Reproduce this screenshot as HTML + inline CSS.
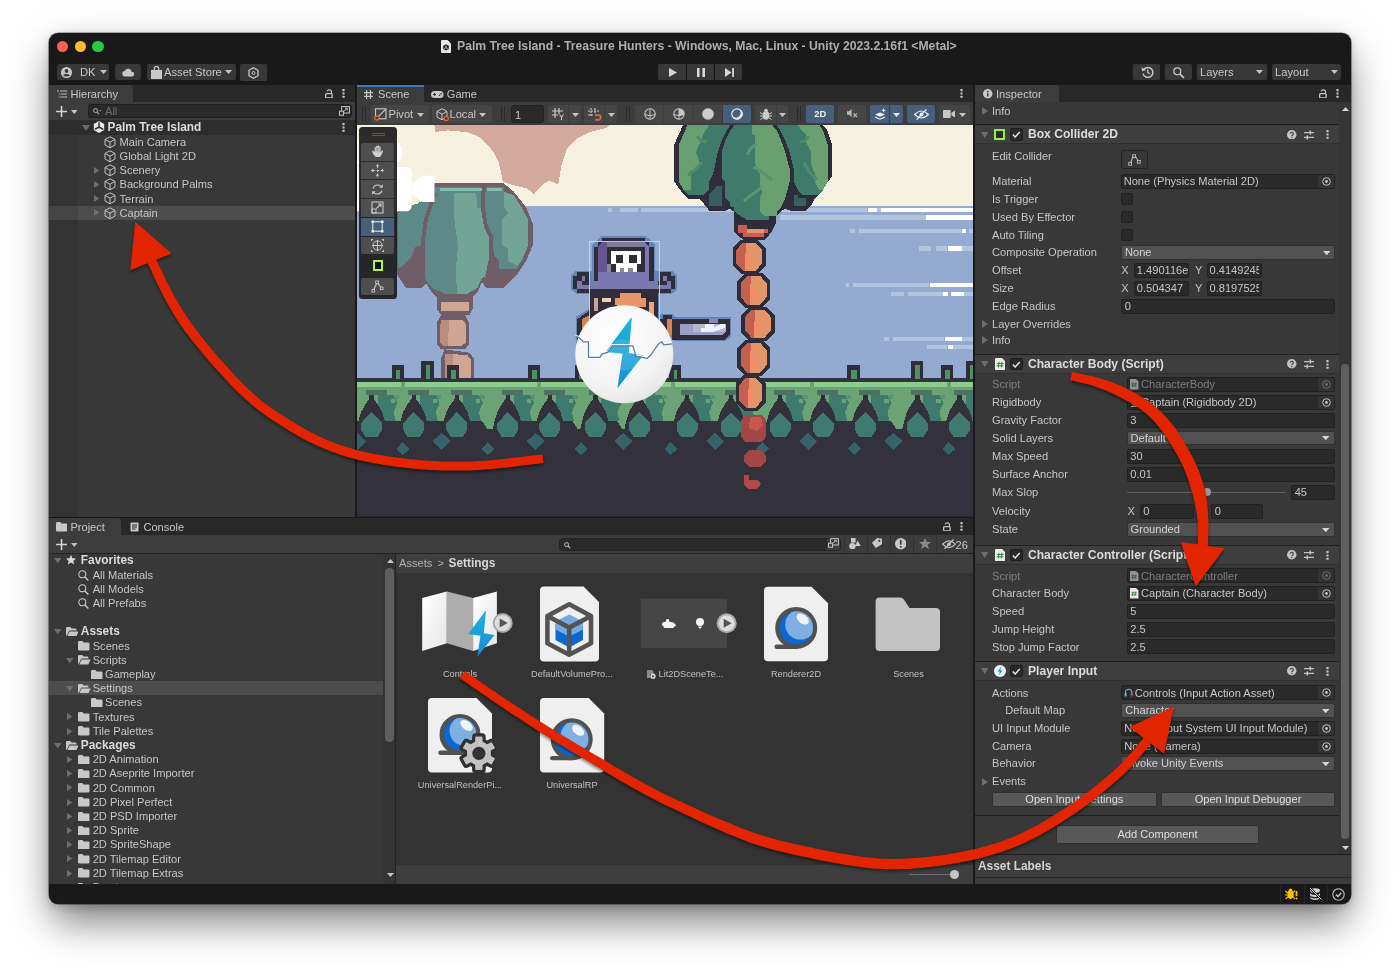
<!DOCTYPE html>
<html><head><meta charset="utf-8"><title>Unity</title>
<style>
*{box-sizing:border-box;margin:0;padding:0}
html,body{width:1400px;height:969px;background:#fff;overflow:hidden}
body{font-family:"Liberation Sans",sans-serif;font-size:11.1px;color:#c6c6c6;position:relative}
#win{position:absolute;left:49px;top:33px;width:1302px;height:871px;background:#191919;border-radius:9.5px;box-shadow:0 0 0 .6px rgba(0,0,0,.55),0 22px 38px -4px rgba(0,0,0,.46),0 3px 9px rgba(0,0,0,.2),0 6px 50px rgba(0,0,0,.1);overflow:hidden}
#page{position:absolute;left:-49px;top:-33px;width:1400px;height:969px;will-change:transform}
#page div,#page span,#page svg{position:absolute}
.tl{top:40.5px;width:11.6px;height:11.6px;border-radius:50%}
.title{left:440px;top:39px;height:14px;line-height:14px;font-weight:bold;font-size:12.2px;color:#adadad;white-space:nowrap}
.tb{top:64px;height:16px;background:#383838;border-radius:2px;line-height:16px;white-space:nowrap;font-size:11.2px}
.panel{background:#383838}
.tabbar{background:#282828;height:17px;left:0;top:0;right:0}
.tab{top:0;height:17px;background:#3c3c3c;line-height:17px;white-space:nowrap;border-radius:0 3px 0 0}
.t{white-space:nowrap;line-height:14px;height:14px}
.b{font-weight:bold;font-size:11.9px}
.dim{color:#8a8a8a}
.row{left:0;right:0;height:14.2px}
.fld{background:#2a2a2a;border:1px solid #212121;border-radius:2px;height:15px;line-height:13px;white-space:nowrap;overflow:hidden}
.dd{background:#515151;border:1px solid #303030;border-radius:2px;height:15px;line-height:13px;white-space:nowrap;overflow:hidden}
.btn{background:#585858;border:1px solid #303030;border-radius:2px;white-space:nowrap;text-align:center}
.cb{background:#2a2a2a;border:1px solid #212121;border-radius:2px;width:12px;height:12px}
.sep{background:#1a1a1a;height:1px}
.sb{background:#454545;border-radius:2px;height:18px;top:105px}
.sbb{background:#46607c}
</style></head><body>
<div id="win"><div id="page">
<!--top-->
<div class="tl" style="left:56.5px;background:#fe5f57"></div>
<div class="tl" style="left:74.5px;background:#febc2e"></div>
<div class="tl" style="left:92px;background:#28c840"></div>
<svg style="left:440.5px;top:39.5px;" width="10" height="13" viewBox="0 0 10 13"><path d="M0 1a1 1 0 0 1 1-1H6.5L10 3.5V12a1 1 0 0 1-1 1H1a1 1 0 0 1-1-1Z" fill="#e6e6e6"/><path d="M5 4.2 7.8 5.8V9L5 10.6 2.2 9V5.8Z" fill="#222"/><path d="M5 5.6v2m0 0L3.3 8.6M5 7.6l1.7 1" stroke="#e6e6e6" stroke-width=".8" fill="none"/></svg>
<div class="title" style="left:457px" id="title">Palm Tree Island - Treasure Hunters - Windows, Mac, Linux - Unity 2023.2.16f1 &lt;Metal&gt;</div>
<div class="tb" style="left:57px;width:52px"><span class="t" style="left:23px;top:1px" id="dk">DK</span><svg style="left:4px;top:2.5px;" width="11" height="11" viewBox="0 0 11 11"><circle cx="5.5" cy="5.5" r="5.5" fill="#c8c8c8"/><circle cx="5.5" cy="4" r="1.9" fill="#383838"/><path d="M2.2 8.2c1-1.6 5.6-1.6 6.6 0-.8 1.6-5.8 1.6-6.6 0Z" fill="#383838"/></svg><svg style="left:43px;top:6px" width="7" height="4" viewBox="0 0 7 4"><path d="M0 0H7L3.5 4Z" fill="#c4c4c4"/></svg></div>
<div class="tb" style="left:115px;width:26px"><svg style="left:7px;top:4px;" width="13" height="8.5" viewBox="0 0 13 8.5"><path d="M3.2 8.5a2.7 2.7 0 0 1-.4-5.4 3.6 3.6 0 0 1 6.9.6 2.4 2.4 0 0 1 .3 4.8Z" fill="#c8c8c8"/></svg></div>
<div class="tb" style="left:147px;width:89px"><span class="t" style="left:17px;top:1px" id="as">Asset Store</span><svg style="left:3.5px;top:1.5px;" width="11" height="13" viewBox="0 0 11 13"><path d="M0 4H11V13H0Z" fill="#c8c8c8"/><path d="M3.3 4V2.6a2.2 2.2 0 0 1 4.4 0V4" fill="none" stroke="#c8c8c8" stroke-width="1.2"/></svg><svg style="left:77.5px;top:6px" width="7" height="4" viewBox="0 0 7 4"><path d="M0 0H7L3.5 4Z" fill="#c4c4c4"/></svg></div>
<div class="tb" style="left:240px;width:27px;top:64px;height:17px"><svg style="left:8px;top:3px;" width="11" height="12" viewBox="0 0 11 12"><path d="M5.5 .7 10 3.3V8.7L5.5 11.3 1 8.7V3.3Z" fill="none" stroke="#c8c8c8" stroke-width="1.3"/><circle cx="5.5" cy="6" r="1.5" fill="none" stroke="#c8c8c8" stroke-width="1"/></svg></div>
<div class="tb" style="left:658px;width:27.5px;border-radius:2px 0 0 2px"><svg style="left:10.5px;top:3.5px;" width="8" height="9" viewBox="0 0 8 9"><path d="M0 0V9L8 4.5Z" fill="#d6d6d6"/></svg></div>
<div class="tb" style="left:686.5px;width:27.5px;border-radius:0"><svg style="left:10px;top:3.5px;" width="8" height="9" viewBox="0 0 8 9"><path d="M0 0H2.6V9H0ZM5.4 0H8V9H5.4Z" fill="#d6d6d6"/></svg></div>
<div class="tb" style="left:715px;width:27px;border-radius:0 2px 2px 0"><svg style="left:9.5px;top:3.5px;" width="9" height="9" viewBox="0 0 9 9"><path d="M0 0V9L6.5 4.5Z" fill="#d6d6d6"/><path d="M7.2 0H9V9H7.2Z" fill="#d6d6d6"/></svg></div>
<div class="tb" style="left:1133px;width:27px"><svg style="left:7.5px;top:2px;" width="13" height="12" viewBox="0 0 13 12"><path d="M3 3.2A5 5 0 1 1 2 7.6" fill="none" stroke="#c8c8c8" stroke-width="1.5"/><path d="M.6 1.2 1 5.2 4.9 4.3Z" fill="#c8c8c8"/><path d="M6.8 3.6V6.6L9 7.8" fill="none" stroke="#c8c8c8" stroke-width="1.3"/></svg></div>
<div class="tb" style="left:1165px;width:27px"><svg style="left:8px;top:2.5px;" width="12" height="12" viewBox="0 0 12 12"><circle cx="4.3" cy="4.3" r="3.5" fill="none" stroke="#c8c8c8" stroke-width="1.2"/><path d="M6.8 6.8 10.8 10.8" stroke="#c8c8c8" stroke-width="1.8"/></svg></div>
<div class="tb" style="left:1197px;width:70px"><span class="t" style="left:3px;top:1px" id="layers">Layers</span><svg style="left:59px;top:6px" width="7" height="4" viewBox="0 0 7 4"><path d="M0 0H7L3.5 4Z" fill="#c4c4c4"/></svg></div>
<div class="tb" style="left:1272px;width:69px"><span class="t" style="left:3px;top:1px">Layout</span><svg style="left:58.5px;top:6px" width="7" height="4" viewBox="0 0 7 4"><path d="M0 0H7L3.5 4Z" fill="#c4c4c4"/></svg></div>
<!--hier-->
<div class="panel" id="hier" style="left:49px;top:85px;width:306px;height:432px">
<div class="tabbar"></div>
<div class="tab" style="left:0;width:84px"><span class="t" style="left:21.5px;top:2px" id="htab">Hierarchy</span><svg style="left:8px;top:4.5px;" width="10" height="8" viewBox="0 0 10 8"><path d="M3 1H10M3.600 4H10M3.600 7H10" stroke="#c4c4c4" stroke-width=".95"/><path d="M.3 .3H1.700V1.700H.3ZM1.600 3.400H2.700V4.600H1.600ZM1.600 6.400H2.700V7.600H1.600Z" fill="#c4c4c4"/></svg></div>
<svg style="left:276px;top:3.8px;" width="8" height="9.5" viewBox="0 0 8 9.5"><rect x=".65" y="4.6" width="6.5" height="4.2" rx=".9" fill="none" stroke="#c4c4c4" stroke-width="1.3"/><path d="M6.500 4.600V2.900a2.300 2.300 0 0 0-4.400-.7" fill="none" stroke="#c4c4c4" stroke-width="1.200"/></svg>
<svg style="left:292.5px;top:4px;" width="3" height="9" viewBox="0 0 3 9"><rect x=".4" y=".1" width="2.2" height="2.1" rx=".5" fill="#c4c4c4"/><rect x=".4" y="3.4" width="2.2" height="2.1" rx=".5" fill="#c4c4c4"/><rect x=".4" y="6.7" width="2.2" height="2.1" rx=".5" fill="#c4c4c4"/></svg>
<div style="left:0;top:17px;width:306px;height:18px;background:#3c3c3c"></div>
<svg style="left:7px;top:20.5px;" width="11" height="11" viewBox="0 0 11 11"><path d="M5.5 0V11M0 5.5H11" stroke="#d2d2d2" stroke-width="1.6"/></svg>
<svg style="left:22px;top:24.5px" width="6.5" height="4" viewBox="0 0 6.5 4"><path d="M0 0H6.5L3.25 4Z" fill="#c4c4c4"/></svg>
<div style="left:39px;top:19px;width:264px;height:14px;background:#2a2a2a;border:1px solid #1f1f1f;border-radius:3px"><svg style="left:4px;top:3px;" width="9" height="7" viewBox="0 0 9 7"><circle cx="2.6" cy="2.6" r="2" fill="none" stroke="#b0b0b0" stroke-width="1"/><path d="M4 4 6 6.4" stroke="#b0b0b0" stroke-width="1.1"/><path d="M6 2.2H8.6L7.3 3.6Z" fill="#b0b0b0"/></svg><span class="t" style="left:16px;top:-1px;color:#6e6e6e">All</span><svg style="left:250px;top:1px;" width="11" height="10" viewBox="0 0 11 10"><rect x="2.6" y=".6" width="7.8" height="6.4" fill="none" stroke="#c4c4c4" stroke-width="1"/><rect x=".5" y="5.2" width="4" height="4" fill="#2a2a2a" stroke="#c4c4c4" stroke-width="1"/><path d="M5 5 8 2.4M6 2.2H8.3V4.4" stroke="#c4c4c4" stroke-width=".9" fill="none"/></svg></div>
<div style="left:0;top:35px;width:306px;height:397px;background:#383838"></div>
<div style="left:0;top:35px;width:29px;height:397px;background:#333"></div>
<div style="left:0;top:35px;width:306px;height:14.5px;background:#2d2d2d"></div>
<div style="left:0;top:120.6px;width:306px;height:14.2px;background:#4d4d4d"></div>
<div style="left:0;top:120.6px;width:29px;height:14.2px;background:#454545"></div>
<svg style="left:33px;top:39.5px" width="8" height="6" viewBox="0 0 8 6"><path d="M0 0H8L4.0 6Z" fill="#6a6a6a"/></svg>
<svg style="left:44px;top:36px;" width="12" height="12" viewBox="0 0 12 12"><path d="M6 0 11.2 3V9L6 12 .8 9V3Z" fill="#e8e8e8"/><path d="M6 6V1.2M6 6 1.8 8.4M6 6l4.2 2.4" stroke="#2d2d2d" stroke-width="1.5" fill="none"/><path d="M6 2.6 8.9 4.3V7.7L6 9.4 3.1 7.7V4.3Z" fill="none" stroke="#2d2d2d" stroke-width=".01"/></svg>
<span class="t b" style="left:58.5px;top:35px;color:#dcdcdc" id="pti">Palm Tree Island</span>
<svg style="left:293px;top:37.5px;" width="3" height="9" viewBox="0 0 3 9"><rect x=".4" y=".1" width="2.2" height="2.1" rx=".5" fill="#c4c4c4"/><rect x=".4" y="3.4" width="2.2" height="2.1" rx=".5" fill="#c4c4c4"/><rect x=".4" y="6.7" width="2.2" height="2.1" rx=".5" fill="#c4c4c4"/></svg>
<svg style="left:55px;top:50.5px;" width="12" height="12.6" viewBox="0 0 12 12.6"><path d="M6 .8 11 3.4V9L6 11.8 1 9V3.4Z" fill="none" stroke="#c4c4c4" stroke-width="1"/><path d="M1 3.4 6 6.2 11 3.4M6 6.2V11.8" fill="none" stroke="#c4c4c4" stroke-width="1"/></svg>
<span class="t" style="left:70.5px;top:49.8px" id="h0">Main Camera</span>
<svg style="left:55px;top:64.69999999999999px;" width="12" height="12.6" viewBox="0 0 12 12.6"><path d="M6 .8 11 3.4V9L6 11.8 1 9V3.4Z" fill="none" stroke="#c4c4c4" stroke-width="1"/><path d="M1 3.4 6 6.2 11 3.4M6 6.2V11.8" fill="none" stroke="#c4c4c4" stroke-width="1"/></svg>
<span class="t" style="left:70.5px;top:64.0px" id="h1">Global Light 2D</span>
<svg style="left:44.5px;top:81.69999999999999px" width="5.5" height="7" viewBox="0 0 5.5 7"><path d="M0 0V7L5.5 3.5Z" fill="#6e6e6e"/></svg>
<svg style="left:55px;top:78.89999999999999px;" width="12" height="12.6" viewBox="0 0 12 12.6"><path d="M6 .8 11 3.4V9L6 11.8 1 9V3.4Z" fill="none" stroke="#c4c4c4" stroke-width="1"/><path d="M1 3.4 6 6.2 11 3.4M6 6.2V11.8" fill="none" stroke="#c4c4c4" stroke-width="1"/></svg>
<span class="t" style="left:70.5px;top:78.2px" id="h2">Scenery</span>
<svg style="left:44.5px;top:95.89999999999999px" width="5.5" height="7" viewBox="0 0 5.5 7"><path d="M0 0V7L5.5 3.5Z" fill="#6e6e6e"/></svg>
<svg style="left:55px;top:93.1px;" width="12" height="12.6" viewBox="0 0 12 12.6"><path d="M6 .8 11 3.4V9L6 11.8 1 9V3.4Z" fill="none" stroke="#c4c4c4" stroke-width="1"/><path d="M1 3.4 6 6.2 11 3.4M6 6.2V11.8" fill="none" stroke="#c4c4c4" stroke-width="1"/></svg>
<span class="t" style="left:70.5px;top:92.4px" id="h3">Background Palms</span>
<svg style="left:44.5px;top:110.1px" width="5.5" height="7" viewBox="0 0 5.5 7"><path d="M0 0V7L5.5 3.5Z" fill="#6e6e6e"/></svg>
<svg style="left:55px;top:107.3px;" width="12" height="12.6" viewBox="0 0 12 12.6"><path d="M6 .8 11 3.4V9L6 11.8 1 9V3.4Z" fill="none" stroke="#c4c4c4" stroke-width="1"/><path d="M1 3.4 6 6.2 11 3.4M6 6.2V11.8" fill="none" stroke="#c4c4c4" stroke-width="1"/></svg>
<span class="t" style="left:70.5px;top:106.6px" id="h4">Terrain</span>
<svg style="left:44.5px;top:124.29999999999998px" width="5.5" height="7" viewBox="0 0 5.5 7"><path d="M0 0V7L5.5 3.5Z" fill="#6e6e6e"/></svg>
<svg style="left:55px;top:121.49999999999999px;" width="12" height="12.6" viewBox="0 0 12 12.6"><path d="M6 .8 11 3.4V9L6 11.8 1 9V3.4Z" fill="none" stroke="#c4c4c4" stroke-width="1"/><path d="M1 3.4 6 6.2 11 3.4M6 6.2V11.8" fill="none" stroke="#c4c4c4" stroke-width="1"/></svg>
<span class="t" style="left:70.5px;top:120.8px" id="h5">Captain</span>
</div>
<!--scene-->
<div class="panel" style="left:357px;top:85px;width:616px;height:432px;background:#282828"></div>
<div style="left:357px;top:85px;width:67.3px;height:17px;background:#3c3c3c;border-radius:2px 3px 0 0"></div><div style="left:357px;top:85px;width:67.3px;height:2px;background:#3a79bb"></div>
<svg style="left:364.3px;top:89.5px;" width="9" height="9" viewBox="0 0 9 9"><path d="M2.6 0V9M6.4 0V9M0 2.6H9M0 6.4H9" stroke="#c8c8c8" stroke-width="1.2"/></svg>
<span class="t" style="left:378px;top:87.3px" id="scn">Scene</span>
<svg style="left:431.4px;top:90.5px;" width="12.5" height="7" viewBox="0 0 12.5 7"><rect x="0" y="0" width="12.5" height="7" rx="3.5" fill="#c8c8c8"/><path d="M2.2 3.5H5M3.6 2.1V4.9" stroke="#282828" stroke-width="1"/><circle cx="8.6" cy="4.3" r=".8" fill="#282828"/><circle cx="10.2" cy="2.7" r=".8" fill="#282828"/></svg>
<span class="t" style="left:446.8px;top:87.3px">Game</span>
<svg style="left:960px;top:89px;" width="3" height="9" viewBox="0 0 3 9"><rect x=".4" y=".1" width="2.2" height="2.1" rx=".5" fill="#c4c4c4"/><rect x=".4" y="3.4" width="2.2" height="2.1" rx=".5" fill="#c4c4c4"/><rect x=".4" y="6.7" width="2.2" height="2.1" rx=".5" fill="#c4c4c4"/></svg>
<div style="left:357px;top:102px;width:616px;height:23px;background:#3c3c3c"></div>
<div style="left:362px;top:106px;width:1px;height:15px;background:#2a2a2a"></div><div style="left:364.6px;top:106px;width:1px;height:15px;background:#2a2a2a"></div>
<div class="sb " style="left:371px;width:57.5px;border-radius:2px"><svg style="left:3px;top:3px;" width="13" height="13" viewBox="0 0 13 13"><rect x="1.5" y=".8" width="10.5" height="10" fill="none" stroke="#c8c8c8" stroke-width="1.1"/><path d="M3 10 12 .8" stroke="#c8c8c8" stroke-width="1.1"/><circle cx="2.8" cy="10" r="2.1" fill="#454545" stroke="#e8683a" stroke-width="1.2"/></svg><span class="t" style="left:17.5px;top:2px" id="pivot">Pivot</span><svg style="left:45.5px;top:7.5px" width="7" height="4" viewBox="0 0 7 4"><path d="M0 0H7L3.5 4Z" fill="#c4c4c4"/></svg></div>
<div class="sb " style="left:432px;width:59.8px;border-radius:2px"><svg style="left:3.5px;top:2.5px;" width="13" height="13.5" viewBox="0 0 13 13.5"><path d="M6 .8 11 3.4V9L6 11.8 1 9V3.4Z" fill="none" stroke="#c8c8c8" stroke-width="1"/><path d="M1 3.4 6 6.2 11 3.4M6 6.2V11.8" fill="none" stroke="#c8c8c8" stroke-width="1"/><circle cx="10.3" cy="10.6" r="2.1" fill="#454545" stroke="#e8683a" stroke-width="1.2"/></svg><span class="t" style="left:17.5px;top:2px">Local</span><svg style="left:47px;top:7.5px" width="7" height="4" viewBox="0 0 7 4"><path d="M0 0H7L3.5 4Z" fill="#c4c4c4"/></svg></div>
<div style="left:501px;top:106px;width:1px;height:15px;background:#2a2a2a"></div><div style="left:503.6px;top:106px;width:1px;height:15px;background:#2a2a2a"></div>
<div style="left:511px;top:105px;width:32.5px;height:18px;background:#2a2a2a;border:1px solid #212121;border-radius:3px"><span class="t" style="left:3px;top:1.5px">1</span></div>
<div class="sb " style="left:548px;width:19.8px;border-radius:2px 0 0 2px"><svg style="left:4px;top:3px;" width="13" height="12" viewBox="0 0 13 12"><path d="M3 0V10M7 0V6M0 3H11M0 7H6" stroke="#c8c8c8" stroke-width="1.2"/><path d="M7.5 6.5 9.5 9 11.5 6.5M9.5 9V12" stroke="#c8c8c8" stroke-width="1.1" fill="none"/></svg></div>
<div class="sb " style="left:568.6px;width:12.4px;border-radius:0 2px 2px 0"><svg style="left:3px;top:7.5px" width="7" height="4" viewBox="0 0 7 4"><path d="M0 0H7L3.5 4Z" fill="#c4c4c4"/></svg></div>
<div class="sb " style="left:584.2px;width:20.0px;border-radius:2px 0 0 2px"><svg style="left:3.5px;top:3px;" width="14" height="13" viewBox="0 0 14 13"><path d="M3 0V9M7 0V5M0 3H11M0 7H5" stroke="#c8c8c8" stroke-width="1.2" stroke-dasharray="2 1"/><path d="M7 7.2H10.4a2.3 2.3 0 0 1 0 4.6H7" fill="none" stroke="#e8683a" stroke-width="1.7"/></svg></div>
<div class="sb " style="left:605px;width:12.2px;border-radius:0 2px 2px 0"><svg style="left:2.8px;top:7.5px" width="7" height="4" viewBox="0 0 7 4"><path d="M0 0H7L3.5 4Z" fill="#c4c4c4"/></svg></div>
<div style="left:626.3px;top:106px;width:1px;height:15px;background:#2a2a2a"></div><div style="left:628.9px;top:106px;width:1px;height:15px;background:#2a2a2a"></div>
<div class="sb " style="left:635.2px;width:28.2px;border-radius:2px 0 0 2px"><svg style="left:8.5px;top:3px;" width="12" height="12" viewBox="0 0 12 12"><circle cx="6" cy="6" r="5.2" fill="none" stroke="#c8c8c8" stroke-width="1.1"/><path d="M6 .8V11.2M.8 6.6Q6 8.8 11.2 6.6" fill="none" stroke="#c8c8c8" stroke-width="1"/></svg></div>
<div class="sb " style="left:664.3px;width:28.7px;border-radius:0"><svg style="left:8.5px;top:3px;" width="12" height="12" viewBox="0 0 12 12"><circle cx="6" cy="6" r="5.2" fill="none" stroke="#c8c8c8" stroke-width="1.1"/><path d="M6 .8V11.2M.8 6.6Q6 8.8 11.2 6.6" fill="none" stroke="#c8c8c8" stroke-width="1"/><path d="M6 .8A5.2 5.2 0 0 1 11.2 6.6Q8.6 7.7 6 7.8Z" fill="#c8c8c8"/></svg></div>
<div class="sb " style="left:694px;width:28.0px;border-radius:0"><svg style="left:8px;top:3px;" width="12" height="12" viewBox="0 0 12 12"><circle cx="6" cy="6" r="5.8" fill="#cdcdcd"/></svg></div>
<div class="sb sbb" style="left:722.9px;width:28.5px;border-radius:0 2px 2px 0"><svg style="left:8.5px;top:3px;" width="12" height="12" viewBox="0 0 12 12"><circle cx="6" cy="6" r="5.2" fill="none" stroke="#ececec" stroke-width="1.2"/><path d="M9.4 2A5 5 0 0 1 2.3 9.6 5.4 5.4 0 0 0 9.4 2Z" fill="#ececec" stroke="#ececec" stroke-width="1"/></svg></div>
<div class="sb " style="left:755px;width:21.0px;border-radius:2px 0 0 2px"><svg style="left:4.5px;top:2.5px;" width="12" height="13" viewBox="0 0 12 13"><ellipse cx="6" cy="7.4" rx="3.3" ry="4.4" fill="#c8c8c8"/><circle cx="6" cy="2.6" r="1.9" fill="#c8c8c8"/><path d="M0 4.6 3 6.2M0 8H3M.4 11.6 3 9.6M12 4.6 9 6.2M12 8H9M11.6 11.6 9 9.6" stroke="#c8c8c8" stroke-width="1"/></svg></div>
<div class="sb " style="left:776.7px;width:11.3px;border-radius:0 2px 2px 0"><svg style="left:2.3px;top:7.5px" width="7" height="4" viewBox="0 0 7 4"><path d="M0 0H7L3.5 4Z" fill="#c4c4c4"/></svg></div>
<div style="left:797px;top:106px;width:1px;height:15px;background:#2a2a2a"></div><div style="left:799.6px;top:106px;width:1px;height:15px;background:#2a2a2a"></div>
<div class="sb sbb" style="left:805.8px;width:28.4px;border-radius:2px"><span class="t b" style="left:8.5px;top:2px;font-size:9.4px;color:#f0f0f0">2D</span></div>
<div class="sb " style="left:838px;width:28.0px;border-radius:2px"><svg style="left:8.5px;top:4px;" width="12" height="10" viewBox="0 0 12 10"><path d="M0 2.2H2L4.6 0V8L2 5.8H0Z" fill="#b8b8b8"/><path d="M6.4 4.4 10 8M10 4.4 6.4 8" stroke="#b8b8b8" stroke-width="1.1"/></svg></div>
<div class="sb sbb" style="left:869.7px;width:19.6px;border-radius:2px 0 0 2px"><svg style="left:4px;top:3px;" width="13" height="12" viewBox="0 0 13 12"><path d="M1 6.6 6 4.4 11 6.6 6 8.8Z" fill="#f0f0f0"/><path d="M1 9 6 11.2 11 9" fill="none" stroke="#f0f0f0" stroke-width="1.2"/><path d="M9.6 0 10.3 1.7 12 2.4 10.3 3.1 9.6 4.8 8.9 3.1 7.2 2.4 8.9 1.7Z" fill="#f0f0f0"/></svg></div>
<div class="sb sbb" style="left:890.1px;width:13.1px;border-radius:0 2px 2px 0"><svg style="left:3.2px;top:7.5px" width="7" height="4" viewBox="0 0 7 4"><path d="M0 0H7L3.5 4Z" fill="#e6e6e6"/></svg></div>
<div class="sb sbb" style="left:906.5px;width:28.4px;border-radius:2px"><svg style="left:7px;top:3.5px;" width="15" height="11" viewBox="0 0 15 11"><path d="M.6 5.5Q7.5-1.5 14.4 5.5 7.5 12.5 .6 5.5Z" fill="none" stroke="#f0f0f0" stroke-width="1.2"/><circle cx="7.5" cy="5.5" r="1.9" fill="#f0f0f0"/><path d="M2.6 10.6 12.4 .4" stroke="#f0f0f0" stroke-width="1.3"/></svg></div>
<div class="sb " style="left:938.6px;width:31.8px;border-radius:2px"><svg style="left:4.5px;top:5px;" width="12" height="8" viewBox="0 0 12 8"><rect x="0" y="0" width="7.6" height="8" rx=".8" fill="#c8c8c8"/><path d="M8.4 2.8 12 .6V7.4L8.4 5.2Z" fill="#c8c8c8"/></svg><svg style="left:20.3px;top:7.5px" width="7" height="4" viewBox="0 0 7 4"><path d="M0 0H7L3.5 4Z" fill="#c4c4c4"/></svg></div>
<svg style="left:357px;top:125px" width="616" height="391" viewBox="357 125 616 391" shape-rendering="crispEdges"><rect x="357.0" y="125.0" width="616.0" height="82.0" fill="#f6f0de" /><rect x="357.0" y="206.4" width="616.0" height="173.6" fill="#94aad0" /><polygon points="434.3,124.9 435.4,132.2 440.9,131.1 447.6,130.4 467.5,132.2 478.6,136.6 487.4,144.4 494.1,153.2 498.5,162.1 500.7,170.9 502.9,182.0 514.0,185.3 527.3,188.6 533.9,194.2 542.8,184.2 549.4,180.9 558.3,184.2 561.6,164.3 567.1,148.8 578.2,137.7 589.3,132.2 607.0,127.8 609.2,124.9" fill="#d2a99c" /><rect x="608.0" y="207.6" width="4.0" height="4.3" fill="#b1c6dc" /><rect x="620.0" y="207.6" width="18.0" height="4.3" fill="#b1c6dc" /><rect x="641.0" y="207.6" width="225.5" height="4.3" fill="#b1c6dc" /><rect x="867.6" y="207.6" width="8.9" height="4.3" fill="#ffffff" /><rect x="876.5" y="207.6" width="4.5" height="4.3" fill="#b1c6dc" /><rect x="881.0" y="207.6" width="92.0" height="4.3" fill="#ffffff" /><rect x="780.0" y="215.4" width="146.0" height="4.3" fill="#b1c6dc" /><rect x="926.0" y="215.4" width="47.0" height="4.3" fill="#ffffff" /><rect x="850.0" y="228.7" width="4.5" height="4.3" fill="#b1c6dc" /><rect x="859.0" y="228.7" width="101.6" height="4.3" fill="#b1c6dc" /><rect x="961.7" y="228.7" width="4.3" height="4.3" fill="#ffffff" /><rect x="969.0" y="228.7" width="4.0" height="4.3" fill="#b1c6dc" /><rect x="918.5" y="246.2" width="12.2" height="4.3" fill="#b1c6dc" /><rect x="935.6" y="246.2" width="11.4" height="4.3" fill="#b1c6dc" /><rect x="948.0" y="246.2" width="13.7" height="4.3" fill="#ffffff" /><rect x="961.7" y="246.2" width="11.3" height="4.3" fill="#b1c6dc" /><rect x="845.5" y="282.8" width="3.3" height="4.3" fill="#b1c6dc" /><rect x="853.0" y="282.8" width="75.5" height="4.3" fill="#b1c6dc" /><rect x="929.6" y="282.8" width="43.4" height="4.3" fill="#ffffff" /><rect x="890.9" y="291.6" width="13.1" height="4.3" fill="#b1c6dc" /><rect x="908.0" y="291.6" width="35.0" height="4.3" fill="#b1c6dc" /><rect x="943.0" y="291.6" width="4.5" height="4.3" fill="#ffffff" /><rect x="950.6" y="291.6" width="13.4" height="4.3" fill="#ffffff" /><rect x="964.0" y="291.6" width="9.0" height="4.3" fill="#b1c6dc" /><rect x="884.0" y="336.6" width="4.6" height="4.3" fill="#b1c6dc" /><rect x="893.0" y="336.6" width="51.0" height="4.3" fill="#b1c6dc" /><rect x="944.5" y="336.6" width="17.2" height="4.3" fill="#ffffff" /><rect x="961.7" y="336.6" width="11.3" height="4.3" fill="#b1c6dc" /><rect x="927.4" y="345.0" width="19.9" height="4.3" fill="#b1c6dc" /><rect x="948.0" y="345.0" width="5.0" height="4.3" fill="#ffffff" /><rect x="953.0" y="345.0" width="20.0" height="4.3" fill="#b1c6dc" /><polygon points="434.3,183.2 503.5,183.2 513.7,191.6 526.2,207.4 533.0,224.5 533.0,244.9 526.2,260.8 517.1,274.4 503.5,288.0 486.5,288.0 481.9,282.3 477.4,292.6 472.8,297.1 436.5,297.1 432.0,292.6 426.3,283.5 421.8,288.0 405.9,288.0 396.8,274.4 394.5,215.4 403.6,206.3 417.2,204.0 434.3,192.7" fill="#6f5d68" /><polygon points="397.9,214.3 403.6,206.3 417.2,204.0 434.3,193.8 434.3,201.8 429.7,207.4 425.2,218.8 422.2,238.1 421.8,244.9 415.0,247.2 411.6,256.2 405.9,263.1 400.2,267.6 397.9,267.6" fill="#5d8a87" /><polygon points="435.4,187.0 481.9,187.0 481.9,206.3 485.3,226.7 489.9,235.8 489.9,260.8 486.5,276.7 481.9,277.8 477.4,288.0 467.2,293.7 444.5,293.7 432.0,288.0 427.4,282.3 422.9,274.4 422.9,238.1 426.3,218.8 430.9,207.4 435.4,201.8" fill="#5d8a87" /><polygon points="453.5,192.7 476.2,192.7 477.4,207.4 480.8,208.6 485.3,226.7 489.9,235.8 489.9,260.8 486.5,276.7 481.9,277.8 477.4,288.0 467.2,293.7 457.0,293.7 455.8,269.9 458.1,244.9 454.7,224.5" fill="#73a596" /><polygon points="486.5,187.0 503.5,187.0 503.5,191.6 513.7,195.0 521.6,207.4 528.4,219.9 528.4,244.9 526.2,248.3 521.6,260.8 517.1,268.7 498.9,268.7 498.9,260.8 494.4,256.2 491.0,235.8 487.6,227.9 481.9,207.4" fill="#5d8a87" /><polygon points="503.5,191.6 513.7,195.0 521.6,207.4 528.4,219.9 528.4,244.9 521.6,260.8 517.1,265.3 508.0,260.8 508.0,249.4 502.3,244.9 502.3,218.8 508.0,213.1 503.5,206.3" fill="#73a596" /><polyline points="434.7,192.7 430.4,206.3 425.9,218.8 423.4,238.1 423.4,276.7" fill="none" stroke="#6f5d68" stroke-width="4"/><polyline points="482.6,187.0 482.6,206.3 486.0,226.7 490.5,235.8 490.5,260.8 487.1,276.7" fill="none" stroke="#6f5d68" stroke-width="4"/><polygon points="439.9,187.7 481.9,187.7 481.9,190.9 439.9,190.9" fill="#80bdac" /><polygon points="486.5,187.7 502.3,187.7 502.3,190.9 486.5,190.9" fill="#80bdac" /><polygon points="436.5,297.1 472.8,297.1 472.8,308.4 469.4,315.3 441.1,315.3 436.5,308.4" fill="#6f5d68" /><polygon points="441.1,301.6 469.4,301.6 469.4,310.7 441.1,310.7" fill="#cfa693" /><polygon points="441.1,315.3 464.9,315.3 469.4,323.2 469.4,343.6 464.9,349.3 441.1,349.3 436.5,343.6 436.5,323.2" fill="#6f5d68" /><polygon points="441.1,319.8 462.6,319.8 466.0,324.3 466.0,342.5 461.5,345.9 443.3,345.9 440.4,342.5 440.4,324.3" fill="#cfa693" /><polygon points="441.1,319.8 449.0,319.8 447.9,345.9 443.3,345.9 440.4,342.5 440.4,324.3" fill="#b98d80" /><polygon points="444.5,349.3 469.4,352.7 474.0,358.4 474.0,378.4 441.1,378.4 441.1,358.4" fill="#6f5d68" /><polygon points="445.6,353.8 467.2,355.0 470.6,359.5 470.6,378.4 444.5,378.4 444.5,359.5" fill="#cfa693" /><polygon points="445.6,353.8 453.5,354.3 452.4,378.4 444.5,378.4 444.5,359.5" fill="#b98d80" /><g shape-rendering="geometricPrecision"><circle cx="390" cy="152.5" r="12.6" fill="#ffffff"/><circle cx="362" cy="152.5" r="12.6" fill="#ffffff"/><rect x="340" y="167" width="71.800" height="44.300" rx="5.500" fill="#ffffff"/><polygon points="411.8,183 422.6,175.7 434.5,175.7 434.5,202 422.6,202 411.8,194.8" fill="#ffffff"/></g><rect x="357.0" y="378.0" width="616.0" height="4.5" fill="#2c3540" /><rect x="357.0" y="382.0" width="616.0" height="18.0" fill="#6ba374" /><rect x="357.0" y="382.0" width="616.0" height="5.0" fill="#8ccd8e" /><rect x="357.0" y="399.0" width="616.0" height="117.0" fill="#33313b" /><polygon points="331.2,387 369.4,387 369.4,399 365.6,404 361.1,412 358.6,420.5 342.0,420.5 339.5,412 335.0,404 331.2,399" fill="#6ba374"/><polygon points="335.0,394.6 351.0,394.6 355.0,403 351.0,412 353.0,420.5 342.0,420.5 339.5,412 335.0,404" fill="#3f7a6e"/><rect x="348.0" y="399.0" width="4.3" height="4.3" fill="#6ba374" /><rect x="352.3" y="394.6" width="4.3" height="4.4" fill="#5b9270" /><rect x="323.0" y="390.3" width="21.0" height="4.3" fill="#4d725f" /><polygon points="373.8,387 411.5,387 411.5,399 407.7,404 403.2,412 400.7,420.5 384.6,420.5 382.1,412 377.6,404 373.8,399" fill="#6ba374"/><polygon points="377.6,394.6 393.6,394.6 397.6,403 393.6,412 395.6,420.5 384.6,420.5 382.1,412 377.6,404" fill="#3f7a6e"/><rect x="390.6" y="399.0" width="4.3" height="4.3" fill="#6ba374" /><rect x="394.9" y="394.6" width="4.3" height="4.4" fill="#5b9270" /><rect x="365.6" y="390.3" width="21.0" height="4.3" fill="#4d725f" /><rect x="400.6" y="382.0" width="4.0" height="5.0" fill="#6ba374" /><polygon points="415.9,387 454.7,387 454.7,399 450.9,404 446.4,412 443.9,420.5 426.7,420.5 424.2,412 419.7,404 415.9,399" fill="#6ba374"/><polygon points="419.7,394.6 435.7,394.6 439.7,403 435.7,412 437.7,420.5 426.7,420.5 424.2,412 419.7,404" fill="#3f7a6e"/><rect x="432.7" y="399.0" width="4.3" height="4.3" fill="#6ba374" /><rect x="437.0" y="394.6" width="4.3" height="4.4" fill="#5b9270" /><rect x="407.7" y="390.3" width="21.0" height="4.3" fill="#4d725f" /><polygon points="459.1,387 505.6,387 505.6,399 501.8,404 497.3,412 494.8,420.5 469.9,420.5 467.4,412 462.9,404 459.1,399" fill="#6ba374"/><polygon points="481.4,420 494.8,420 492.8,429 487.4,429" fill="#6ba374"/><polygon points="462.9,394.6 478.9,394.6 482.9,403 478.9,412 480.9,420.5 469.9,420.5 467.4,412 462.9,404" fill="#3f7a6e"/><rect x="475.9" y="399.0" width="4.3" height="4.3" fill="#6ba374" /><rect x="480.2" y="394.6" width="4.3" height="4.4" fill="#5b9270" /><rect x="450.9" y="390.3" width="21.0" height="4.3" fill="#4d725f" /><polygon points="510.0,387 547.7,387 547.7,399 543.9,404 539.4,412 536.9,420.5 520.8,420.5 518.3,412 513.8,404 510.0,399" fill="#6ba374"/><polygon points="513.8,394.6 529.8,394.6 533.8,403 529.8,412 531.8,420.5 520.8,420.5 518.3,412 513.8,404" fill="#3f7a6e"/><rect x="526.8" y="399.0" width="4.3" height="4.3" fill="#6ba374" /><rect x="531.1" y="394.6" width="4.3" height="4.4" fill="#5b9270" /><rect x="501.8" y="390.3" width="21.0" height="4.3" fill="#4d725f" /><rect x="536.9" y="382.0" width="4.0" height="5.0" fill="#6ba374" /><polygon points="552.1,387 593.1,387 593.1,399 589.3,404 584.8,412 582.3,420.5 562.9,420.5 560.4,412 555.9,404 552.1,399" fill="#6ba374"/><polygon points="571.6,420 582.3,420 580.3,429 577.6,429" fill="#6ba374"/><polygon points="555.9,394.6 571.9,394.6 575.9,403 571.9,412 573.9,420.5 562.9,420.5 560.4,412 555.9,404" fill="#3f7a6e"/><rect x="568.9" y="399.0" width="4.3" height="4.3" fill="#6ba374" /><rect x="573.2" y="394.6" width="4.3" height="4.4" fill="#5b9270" /><rect x="543.9" y="390.3" width="21.0" height="4.3" fill="#4d725f" /><polygon points="597.5,387 637.3,387 637.3,399 633.5,404 629.0,412 626.5,420.5 608.3,420.5 605.8,412 601.3,404 597.5,399" fill="#6ba374"/><polygon points="616.4,420 626.5,420 624.5,429 622.4,429" fill="#6ba374"/><polygon points="601.3,394.6 617.3,394.6 621.3,403 617.3,412 619.3,420.5 608.3,420.5 605.8,412 601.3,404" fill="#3f7a6e"/><rect x="614.3" y="399.0" width="4.3" height="4.3" fill="#6ba374" /><rect x="618.6" y="394.6" width="4.3" height="4.4" fill="#5b9270" /><rect x="589.3" y="390.3" width="21.0" height="4.3" fill="#4d725f" /><polygon points="641.7,387 684.8,387 684.8,399 681.0,404 676.5,412 674.0,420.5 652.5,420.5 650.0,412 645.5,404 641.7,399" fill="#6ba374"/><polygon points="645.5,394.6 661.5,394.6 665.5,403 661.5,412 663.5,420.5 652.5,420.5 650.0,412 645.5,404" fill="#3f7a6e"/><rect x="658.5" y="399.0" width="4.3" height="4.3" fill="#6ba374" /><rect x="662.8" y="394.6" width="4.3" height="4.4" fill="#5b9270" /><rect x="633.5" y="390.3" width="21.0" height="4.3" fill="#4d725f" /><rect x="671.2" y="382.0" width="4.0" height="5.0" fill="#6ba374" /><polygon points="689.2,387 728.8,387 728.8,399 725.0,404 720.5,412 718.0,420.5 700.0,420.5 697.5,412 693.0,404 689.2,399" fill="#6ba374"/><polygon points="693.0,394.6 709.0,394.6 713.0,403 709.0,412 711.0,420.5 700.0,420.5 697.5,412 693.0,404" fill="#3f7a6e"/><rect x="706.0" y="399.0" width="4.3" height="4.3" fill="#6ba374" /><rect x="710.3" y="394.6" width="4.3" height="4.4" fill="#5b9270" /><rect x="681.0" y="390.3" width="21.0" height="4.3" fill="#4d725f" /><polygon points="733.2,387 777.8,387 777.8,399 774.0,404 769.5,412 767.0,420.5 744.0,420.5 741.5,412 737.0,404 733.2,399" fill="#6ba374"/><polygon points="754.5,420 767.0,420 765.0,429 760.5,429" fill="#6ba374"/><polygon points="737.0,394.6 753.0,394.6 757.0,403 753.0,412 755.0,420.5 744.0,420.5 741.5,412 737.0,404" fill="#3f7a6e"/><rect x="750.0" y="399.0" width="4.3" height="4.3" fill="#6ba374" /><rect x="754.3" y="394.6" width="4.3" height="4.4" fill="#5b9270" /><rect x="725.0" y="390.3" width="21.0" height="4.3" fill="#4d725f" /><polygon points="782.2,387 820.8,387 820.8,399 817.0,404 812.5,412 810.0,420.5 793.0,420.5 790.5,412 786.0,404 782.2,399" fill="#6ba374"/><polygon points="786.0,394.6 802.0,394.6 806.0,403 802.0,412 804.0,420.5 793.0,420.5 790.5,412 786.0,404" fill="#3f7a6e"/><rect x="799.0" y="399.0" width="4.3" height="4.3" fill="#6ba374" /><rect x="803.3" y="394.6" width="4.3" height="4.4" fill="#5b9270" /><rect x="774.0" y="390.3" width="21.0" height="4.3" fill="#4d725f" /><rect x="809.5" y="382.0" width="4.0" height="5.0" fill="#6ba374" /><polygon points="825.2,387 863.2,387 863.2,399 859.4,404 854.9,412 852.4,420.5 836.0,420.5 833.5,412 829.0,404 825.2,399" fill="#6ba374"/><polygon points="829.0,394.6 845.0,394.6 849.0,403 845.0,412 847.0,420.5 836.0,420.5 833.5,412 829.0,404" fill="#3f7a6e"/><rect x="842.0" y="399.0" width="4.3" height="4.3" fill="#6ba374" /><rect x="846.3" y="394.6" width="4.3" height="4.4" fill="#5b9270" /><rect x="817.0" y="390.3" width="21.0" height="4.3" fill="#4d725f" /><polygon points="867.6,387 915.2,387 915.2,399 911.4,404 906.9,412 904.4,420.5 878.4,420.5 875.9,412 871.4,404 867.6,399" fill="#6ba374"/><polygon points="890.4,420 904.4,420 902.4,429 896.4,429" fill="#6ba374"/><polygon points="871.4,394.6 887.4,394.6 891.4,403 887.4,412 889.4,420.5 878.4,420.5 875.9,412 871.4,404" fill="#3f7a6e"/><rect x="884.4" y="399.0" width="4.3" height="4.3" fill="#6ba374" /><rect x="888.7" y="394.6" width="4.3" height="4.4" fill="#5b9270" /><rect x="859.4" y="390.3" width="21.0" height="4.3" fill="#4d725f" /><polygon points="919.6,387 957.3,387 957.3,399 953.5,404 949.0,412 946.5,420.5 930.4,420.5 927.9,412 923.4,404 919.6,399" fill="#6ba374"/><polygon points="923.4,394.6 939.4,394.6 943.4,403 939.4,412 941.4,420.5 930.4,420.5 927.9,412 923.4,404" fill="#3f7a6e"/><rect x="936.4" y="399.0" width="4.3" height="4.3" fill="#6ba374" /><rect x="940.7" y="394.6" width="4.3" height="4.4" fill="#5b9270" /><rect x="911.4" y="390.3" width="21.0" height="4.3" fill="#4d725f" /><rect x="946.5" y="382.0" width="4.0" height="5.0" fill="#6ba374" /><polygon points="961.7,387 999.8,387 999.8,399 996.0,404 991.5,412 989.0,420.5 972.5,420.5 970.0,412 965.5,404 961.7,399" fill="#6ba374"/><polygon points="965.5,394.6 981.5,394.6 985.5,403 981.5,412 983.5,420.5 972.5,420.5 970.0,412 965.5,404" fill="#3f7a6e"/><rect x="978.5" y="399.0" width="4.3" height="4.3" fill="#6ba374" /><rect x="982.8" y="394.6" width="4.3" height="4.4" fill="#5b9270" /><rect x="953.5" y="390.3" width="21.0" height="4.3" fill="#4d725f" /><rect x="326.8" y="394.6" width="4.4" height="5.4" fill="#2f2d3a" /><polygon points="329.0,412 333.3,416.5 339.5,423 339.5,430 335.0,437 323.0,437 318.5,430 318.5,423 324.7,416.5" fill="#3f7a6e"/><polygon points="357.0,433 366.0,441 357.0,450 348.0,441" fill="#35636a"/><rect x="369.4" y="394.6" width="4.4" height="5.4" fill="#2f2d3a" /><polygon points="371.6,412 375.9,416.5 382.1,423 382.1,430 377.6,437 365.6,437 361.1,430 361.1,423 367.3,416.5" fill="#3f7a6e"/><polygon points="402.6,442 409.6,449 402.6,455 396.6,449" fill="#35636a"/><rect x="411.5" y="394.6" width="4.4" height="5.4" fill="#2f2d3a" /><polygon points="413.7,412 418.0,416.5 424.2,423 424.2,430 419.7,437 407.7,437 403.2,430 403.2,423 409.4,416.5" fill="#3f7a6e"/><polygon points="441.7,433 450.7,441 441.7,450 432.7,441" fill="#35636a"/><rect x="454.7" y="394.6" width="4.4" height="5.4" fill="#2f2d3a" /><polygon points="456.9,412 461.2,416.5 467.4,423 467.4,430 462.9,437 450.9,437 446.4,430 446.4,423 452.6,416.5" fill="#3f7a6e"/><polygon points="487.9,442 494.9,449 487.9,455 481.9,449" fill="#35636a"/><rect x="505.6" y="394.6" width="4.4" height="5.4" fill="#2f2d3a" /><polygon points="507.8,412 512.1,416.5 518.3,423 518.3,430 513.8,437 501.8,437 497.3,430 497.3,423 503.5,416.5" fill="#3f7a6e"/><polygon points="535.8,433 544.8,441 535.8,450 526.8,441" fill="#35636a"/><rect x="547.7" y="394.6" width="4.4" height="5.4" fill="#2f2d3a" /><polygon points="549.9,412 554.2,416.5 560.4,423 560.4,430 555.9,437 543.9,437 539.4,430 539.4,423 545.6,416.5" fill="#3f7a6e"/><polygon points="580.9,442 587.9,449 580.9,455 574.9,449" fill="#35636a"/><rect x="593.1" y="394.6" width="4.4" height="5.4" fill="#2f2d3a" /><polygon points="595.3,412 599.6,416.5 605.8,423 605.8,430 601.3,437 589.3,437 584.8,430 584.8,423 591.0,416.5" fill="#3f7a6e"/><polygon points="623.3,433 632.3,441 623.3,450 614.3,441" fill="#35636a"/><rect x="637.3" y="394.6" width="4.4" height="5.4" fill="#2f2d3a" /><polygon points="639.5,412 643.8,416.5 650.0,423 650.0,430 645.5,437 633.5,437 629.0,430 629.0,423 635.2,416.5" fill="#3f7a6e"/><polygon points="670.5,442 677.5,449 670.5,455 664.5,449" fill="#35636a"/><rect x="684.8" y="394.6" width="4.4" height="5.4" fill="#2f2d3a" /><polygon points="687.0,412 691.3,416.5 697.5,423 697.5,430 693.0,437 681.0,437 676.5,430 676.5,423 682.7,416.5" fill="#3f7a6e"/><polygon points="715.0,433 724.0,441 715.0,450 706.0,441" fill="#35636a"/><rect x="728.8" y="394.6" width="4.4" height="5.4" fill="#2f2d3a" /><polygon points="731.0,412 735.3,416.5 741.5,423 741.5,430 737.0,437 725.0,437 720.5,430 720.5,423 726.7,416.5" fill="#3f7a6e"/><polygon points="762.0,442 769.0,449 762.0,455 756.0,449" fill="#35636a"/><rect x="777.8" y="394.6" width="4.4" height="5.4" fill="#2f2d3a" /><polygon points="780.0,412 784.3,416.5 790.5,423 790.5,430 786.0,437 774.0,437 769.5,430 769.5,423 775.7,416.5" fill="#3f7a6e"/><polygon points="808.0,433 817.0,441 808.0,450 799.0,441" fill="#35636a"/><rect x="820.8" y="394.6" width="4.4" height="5.4" fill="#2f2d3a" /><polygon points="823.0,412 827.3,416.5 833.5,423 833.5,430 829.0,437 817.0,437 812.5,430 812.5,423 818.7,416.5" fill="#3f7a6e"/><polygon points="854.0,442 861.0,449 854.0,455 848.0,449" fill="#35636a"/><rect x="863.2" y="394.6" width="4.4" height="5.4" fill="#2f2d3a" /><polygon points="865.4,412 869.7,416.5 875.9,423 875.9,430 871.4,437 859.4,437 854.9,430 854.9,423 861.1,416.5" fill="#3f7a6e"/><polygon points="893.4,433 902.4,441 893.4,450 884.4,441" fill="#35636a"/><rect x="915.2" y="394.6" width="4.4" height="5.4" fill="#2f2d3a" /><polygon points="917.4,412 921.7,416.5 927.9,423 927.9,430 923.4,437 911.4,437 906.9,430 906.9,423 913.1,416.5" fill="#3f7a6e"/><polygon points="948.4,442 955.4,449 948.4,455 942.4,449" fill="#35636a"/><rect x="957.3" y="394.6" width="4.4" height="5.4" fill="#2f2d3a" /><polygon points="959.5,412 963.8,416.5 970.0,423 970.0,430 965.5,437 953.5,437 949.0,430 949.0,423 955.2,416.5" fill="#3f7a6e"/><polygon points="987.5,433 996.5,441 987.5,450 978.5,441" fill="#35636a"/><rect x="999.8" y="394.6" width="4.4" height="5.4" fill="#2f2d3a" /><polygon points="1002.0,412 1006.3,416.5 1012.5,423 1012.5,430 1008.0,437 996.0,437 991.5,430 991.5,423 997.7,416.5" fill="#3f7a6e"/><polygon points="1033.0,442 1040.0,449 1033.0,455 1027.0,449" fill="#35636a"/><rect x="391.5" y="365.4" width="12.2" height="13.1" fill="#2f2d3a" /><rect x="395.8" y="369.7" width="4.4" height="8.8" fill="#4f9163" /><rect x="421.4" y="361.0" width="12.2" height="17.5" fill="#2f2d3a" /><rect x="425.7" y="365.3" width="4.4" height="13.2" fill="#4f9163" /><rect x="447.0" y="365.4" width="12.0" height="13.1" fill="#2f2d3a" /><rect x="451.3" y="369.7" width="4.2" height="8.8" fill="#4f9163" /><rect x="527.7" y="365.4" width="12.3" height="13.1" fill="#2f2d3a" /><rect x="532.0" y="369.7" width="4.5" height="8.8" fill="#4f9163" /><rect x="575.0" y="365.4" width="12.0" height="13.1" fill="#2f2d3a" /><rect x="579.3" y="369.7" width="4.2" height="8.8" fill="#4f9163" /><rect x="669.4" y="365.4" width="11.1" height="13.1" fill="#2f2d3a" /><rect x="673.7" y="369.7" width="3.3" height="8.8" fill="#4f9163" /><rect x="846.6" y="365.4" width="13.4" height="13.1" fill="#2f2d3a" /><rect x="850.9" y="369.7" width="5.6" height="8.8" fill="#4f9163" /><rect x="910.8" y="361.0" width="12.2" height="17.5" fill="#2f2d3a" /><rect x="915.1" y="365.3" width="4.4" height="13.2" fill="#4f9163" /><rect x="940.7" y="365.4" width="12.3" height="13.1" fill="#2f2d3a" /><rect x="945.0" y="369.7" width="4.5" height="8.8" fill="#4f9163" /><rect x="966.0" y="361.0" width="12.0" height="17.5" fill="#2f2d3a" /><rect x="970.3" y="365.3" width="4.2" height="13.2" fill="#4f9163" /><polygon points="683.0,125.1 674.3,144.4 674.3,181.7 683.6,194.6 688.1,198.7 699.7,198.7 709.4,210.6 725.4,210.6 729.9,208.7 734.4,211.9 738.9,215.8 747.3,220.3 768.5,220.3 776.9,215.8 780.7,211.3 785.2,208.7 790.4,210.6 806.4,210.6 810.9,206.1 814.8,198.7 818.6,194.6 823.1,190.1 827.6,181.7 832.1,176.6 832.1,144.4 827.6,130.9 823.1,125.1" fill="#2f2d3a" /><polygon points="687.5,125.1 678.9,144.4 678.9,181.7 683.6,190.1 688.1,194.6 704.2,194.6 708.7,190.1 708.7,183.0 713.2,174.0 717.7,152.1 721.6,140.6 726.7,130.9 729.9,125.1" fill="#407a6a" /><polygon points="687.5,125.1 678.9,144.4 678.9,181.7 683.6,190.1 691.4,190.1 691.4,171.4 699.7,162.4 695.9,152.1 699.7,143.1 704.9,130.9 709.4,125.1" fill="#68a070" /><polygon points="734.4,125.1 729.9,130.9 725.4,140.6 721.6,152.1 721.6,177.9 725.4,181.7 725.4,198.4 729.9,202.3 729.9,206.1 734.4,207.4 734.4,211.3 738.9,215.8 747.3,220.3 768.5,220.3 768.5,215.8 776.9,215.8 776.9,211.3 780.7,207.4 785.2,198.4 789.7,181.7 789.7,168.9 785.2,152.1 780.7,139.3 776.9,130.9 772.4,125.1" fill="#407a6a" /><polygon points="751.8,125.1 751.8,134.1 755.0,135.4 755.0,164.4 760.1,174.0 760.1,186.9 762.7,192.0 760.1,197.1 760.1,211.3 764.0,215.8 776.9,215.8 776.9,211.3 780.7,207.4 785.2,198.4 789.7,181.7 789.7,168.9 785.2,152.1 780.7,139.3 776.9,130.9 772.4,125.1" fill="#68a070" /><polygon points="776.9,125.1 780.7,130.9 785.2,140.6 789.7,152.1 793.6,168.9 793.6,181.7 798.1,190.1 801.9,194.6 818.6,194.6 823.1,190.1 827.6,181.7 827.6,144.4 823.1,130.9 819.3,125.1" fill="#407a6a" /><polygon points="798.1,125.1 801.9,130.9 806.4,135.4 806.4,143.1 810.9,152.1 810.9,163.7 814.8,174.0 814.8,181.7 819.3,190.1 823.1,190.1 827.6,181.7 827.6,144.4 823.1,130.9 819.3,125.1" fill="#68a070" /><polygon points="709.4,194.6 713.2,190.1 717.1,185.6 721.6,185.6 721.6,206.1 709.4,206.1" fill="#35605f" /><polygon points="793.6,194.6 798.1,194.6 798.1,198.4 806.4,198.4 806.4,206.1 793.6,206.1" fill="#35605f" /><polyline points="747.3,154.7 749.9,149.6 753.7,145.7 757.6,144.4" fill="none" stroke="#5a9470" stroke-width="3"/><polyline points="753.7,166.9 760.1,170.8 766.6,175.3 771.7,180.4" fill="none" stroke="#5a9470" stroke-width="3"/><polyline points="743.4,201.0 748.6,197.1 753.7,193.3 761.4,187.5" fill="none" stroke="#5a9470" stroke-width="3"/><polyline points="688.1,175.3 697.1,167.6 702.3,162.4" fill="none" stroke="#4f8c6e" stroke-width="3"/><polyline points="697.1,136.7 702.3,141.9 707.4,141.9" fill="none" stroke="#4f8c6e" stroke-width="3"/><polyline points="800.0,141.9 805.1,140.6 809.0,136.7" fill="none" stroke="#4f8c6e" stroke-width="3"/><polyline points="803.9,162.4 809.0,171.4 816.7,179.8" fill="none" stroke="#4f8c6e" stroke-width="3"/><polygon points="734.4,211.9 734.4,231.9 738.9,236.4 743.4,240.0 764.0,240.0 767.9,236.4 771.7,231.9 776.2,222.9 776.2,215.8 768.5,220.3 747.3,220.3" fill="#2f2d3a" /><polygon points="738.3,224.8 747.3,224.8 747.3,228.6 767.9,228.6 767.9,233.1 764.0,233.1 764.0,237.0 743.4,237.0 743.4,233.1 738.3,233.1" fill="#c95d52" /><polygon points="747.3,228.6 764.0,228.6 764.0,233.1 747.3,233.1" fill="#e3956a" /><polygon points="741.1,239.5 757.4,239.5 766.0,248.1 766.0,265.4 757.4,274.0 741.1,274.0 732.5,265.4 732.5,248.1" fill="#2f2d3a"/><polygon points="745.6,272.5 761.7,272.5 770.3,281.1 770.3,299.4 761.7,308.0 745.6,308.0 737.0,299.4 737.0,281.1" fill="#2f2d3a"/><polygon points="749.8,306.5 766.2,306.5 774.8,315.1 774.8,332.4 766.2,341.0 749.8,341.0 741.2,332.4 741.2,315.1" fill="#2f2d3a"/><polygon points="745.6,339.5 761.7,339.5 770.3,348.1 770.3,367.4 761.7,376.0 745.6,376.0 737.0,367.4 737.0,348.1" fill="#2f2d3a"/><polygon points="744.1,374.5 757.4,374.5 766.0,383.1 766.0,402.4 757.4,411.0 744.1,411.0 735.5,402.4 735.5,383.1" fill="#2f2d3a"/><polygon points="742.8,242.7 755.7,242.7 762.2,250.2 762.2,263.3 755.7,270.8 742.8,270.8 736.3,263.3 736.3,250.2" fill="#e3956a"/><polygon points="742.8,242.7 746.3,242.7 745.3,270.8 742.8,270.8 736.3,263.3 736.3,250.2" fill="#c4604f"/><rect x="745.3" y="253.7" width="5.5" height="12.6" fill="#f58b68" /><polygon points="747.3,275.7 760.0,275.7 766.5,283.2 766.5,297.3 760.0,304.8 747.3,304.8 740.8,297.3 740.8,283.2" fill="#e3956a"/><polygon points="747.3,275.7 750.8,275.7 749.8,304.8 747.3,304.8 740.8,297.3 740.8,283.2" fill="#c4604f"/><rect x="749.8" y="286.7" width="5.5" height="13.6" fill="#f58b68" /><polygon points="751.5,309.7 764.5,309.7 771.0,317.2 771.0,330.3 764.5,337.8 751.5,337.8 745.0,330.3 745.0,317.2" fill="#e3956a"/><polygon points="751.5,309.7 755.0,309.7 754.0,337.8 751.5,337.8 745.0,330.3 745.0,317.2" fill="#c4604f"/><rect x="754.0" y="320.7" width="5.5" height="12.6" fill="#f58b68" /><polygon points="747.3,342.7 760.0,342.7 766.5,350.2 766.5,365.3 760.0,372.8 747.3,372.8 740.8,365.3 740.8,350.2" fill="#e3956a"/><polygon points="747.3,342.7 750.8,342.7 749.8,372.8 747.3,372.8 740.8,365.3 740.8,350.2" fill="#c4604f"/><rect x="749.8" y="353.7" width="5.5" height="14.6" fill="#f58b68" /><polygon points="745.8,377.7 755.7,377.7 762.2,385.2 762.2,400.3 755.7,407.8 745.8,407.8 739.3,400.3 739.3,385.2" fill="#e3956a"/><polygon points="745.8,377.7 749.3,377.7 748.3,407.8 745.8,407.8 739.3,400.3 739.3,385.2" fill="#c4604f"/><rect x="748.3" y="388.7" width="5.5" height="14.6" fill="#f58b68" /><polygon points="745.5,415 761.5,415 765.8,420 765.8,437 761.5,442 745.5,442 741.4,437 741.4,420" fill="#a34646"/><polygon points="750,417 761,417 763,426 757,431 749,428" fill="#c9574b"/><polygon points="750,449.5 760,449.5 766,456 766,462 760,467 750,467 744,462 744,456" fill="#a34646"/><polygon points="744,475 748.5,475 748.5,479.500 757,479.500 761,483.500 757,489 748.500,489 744,484" fill="#b04a48"/><polygon points="600.9,236.2 646.1,236.2 655.4,244.9 655.4,270.9 672.1,270.9 677.1,275.8 677.1,289.4 672.1,293.8 659.7,293.8 659.7,314.2 672.7,314.2 675.2,317.3 730.9,317.3 730.9,336.5 726.0,340.8 674.0,340.8 659.1,326.6 659.1,348.9 576.1,348.9 576.1,316.7 588.5,309.2 588.5,293.8 576.1,293.8 571.2,289.4 571.2,275.8 576.1,270.9 592.2,270.9 592.2,244.9" fill="#5c7fb0" opacity=".85"/><polygon points="589.8,291.3 657.9,291.3 657.9,319.2 662.8,319.2 662.8,348.9 577.4,348.9 577.4,319.2 582.3,315.4 589.8,310.5" fill="#2f2d3a" /><polygon points="619.5,293.2 641.2,293.2 641.2,297.5 645.5,297.5 645.5,306.8 619.5,306.8 615.1,304.3 615.1,297.5 619.5,297.5" fill="#e9956a" /><polygon points="594.1,297.5 598.4,297.5 598.4,310.5 594.1,310.5" fill="#c9a29a" /><polygon points="602.1,298.1 610.8,298.1 610.8,301.8 602.1,301.8" fill="#f7cdb5" /><polygon points="649.2,301.8 653.5,301.8 653.5,316.7 649.2,316.7" fill="#f0a870" /><polygon points="581.7,319.2 589.8,315.4 589.8,335.3 581.7,335.3" fill="#d8824f" /><polygon points="573.0,276.4 577.4,276.4 577.4,272.1 589.8,272.1 589.8,280.8 659.1,280.8 659.1,272.1 670.9,272.1 670.9,276.4 675.2,276.4 675.2,288.8 670.9,288.8 670.9,292.5 577.4,292.5 577.4,288.8 573.0,288.8" fill="#2f2d3a" /><polygon points="577.4,280.8 581.7,280.8 581.7,285.1 666.5,285.1 666.5,280.8 670.9,280.8 670.9,288.8 577.4,288.8" fill="#7b78b0" /><polygon points="581.7,276.4 585.4,276.4 585.4,280.8 581.7,280.8" fill="#7b78b0" /><polygon points="662.8,276.4 666.5,276.4 666.5,280.8 662.8,280.8" fill="#7b78b0" /><polygon points="602.1,238.0 644.9,238.0 644.9,242.4 649.2,242.4 649.2,246.7 653.5,246.7 653.5,280.8 594.1,280.8 594.1,246.7 598.4,246.7 598.4,242.4 602.1,242.4" fill="#2f2d3a" /><polygon points="602.1,242.4 644.9,242.4 649.2,246.7 649.2,280.8 657.9,280.8 657.9,285.1 589.8,285.1 589.8,280.8 598.4,280.8 598.4,246.7" fill="#7b78b0" /><polygon points="602.1,242.4 607.1,242.4 607.1,272.1 598.4,272.1 598.4,246.7" fill="#6a5594" /><polygon points="607.1,243.0 641.2,243.0 641.2,246.7 607.1,246.7" fill="#7f7f90" /><polygon points="607.1,246.7 644.9,246.7 644.9,272.1 607.1,272.1" fill="#2f2d3a" /><polygon points="611.4,251.1 641.2,251.1 641.2,264.1 636.8,264.1 636.8,272.1 615.8,272.1 615.8,264.1 611.4,264.1" fill="#ffffff" /><polygon points="615.8,255.4 623.2,255.4 623.2,263.4 615.8,263.4" fill="#2f2d3a" /><polygon points="628.8,255.4 636.8,255.4 636.8,263.4 628.8,263.4" fill="#2f2d3a" /><polygon points="620.1,268.4 623.8,268.4 623.8,272.1 620.1,272.1" fill="#8a8a94" /><polygon points="628.2,268.4 632.5,268.4 632.5,272.1 628.2,272.1" fill="#8a8a94" /><polygon points="607.1,264.1 611.4,264.1 611.4,272.1 607.1,272.1" fill="#8a8a94" /><polygon points="662.8,314.8 671.5,314.8 671.5,319.2 675.8,319.2 675.8,318.5 729.7,318.5 729.7,335.3 724.7,339.6 671.5,339.6 671.5,335.3 662.8,335.3" fill="#2f2d3a" /><polygon points="666.5,319.2 671.5,319.2 671.5,335.3 666.5,335.3" fill="#d8824f" /><polygon points="680.2,323.5 726.0,323.5 726.0,331.5 722.3,335.3 680.2,335.3" fill="#9aa0c5" /><polygon points="692.5,323.5 726.0,323.5 726.0,331.5 692.5,331.5" fill="#b4b6cc" /><polygon points="701.2,327.8 704.9,327.8 704.9,324.1 713.6,324.1 713.6,327.8 721.0,324.1 724.7,324.1 724.7,327.8 713.6,331.5 701.2,331.5" fill="#eef0fb" /><polygon points="709.3,319.2 717.9,319.2 717.9,322.9 709.3,322.9" fill="#8c86bd" /><rect x="589" y="241" width="70" height="137" fill="none" stroke="#bfe9a8" stroke-width=".9"/><defs><radialGradient id="cg" cx=".4" cy=".3" r=".75"><stop offset="0" stop-color="#ffffff"/><stop offset=".7" stop-color="#f3f3f3"/><stop offset="1" stop-color="#e4e4e4"/></radialGradient><linearGradient id="bg" x1="0" y1="0" x2="0" y2="1"><stop offset="0" stop-color="#1cb6da"/><stop offset="1" stop-color="#1690d6"/></linearGradient></defs><g shape-rendering="geometricPrecision"><circle cx="624.3" cy="354.3" r="49" fill="url(#cg)"/><polygon points="630.8,318 605.6,352.1 622.6,353.7 617.4,388.2 643.2,355.2 628.8,353.1 631.8,318" fill="url(#bg)"/><circle cx="624" cy="355" r="15.500" fill="#ffffff" opacity=".12" stroke="#ffffff" stroke-opacity=".5" stroke-width=".6"/><polyline points="575.5,335.6 579.2,336.6 583.3,340.7 589.5,340.7 589.5,356.2 599.9,356.2 601.9,353.1 608.1,351.1 612.2,344.9 633.9,344.9 637.0,355.2 647.3,357.3 651.5,353.1 655.6,346.9 658.7,342.8 661.8,340.7 663.8,343.8 672.1,342.8" fill="none" stroke="#ffffff" stroke-width="1.6" opacity=".9"/><polyline points="575.5,336.6 579.2,337.6 583.3,341.8 588.5,341.8 588.5,357.3 599.9,357.3 601.9,354.2 608.1,352.1 612.2,345.9 632.9,345.9 636.0,356.2 647.3,358.3 651.5,354.2 655.6,348.0 658.7,343.8 661.8,341.8 663.8,344.9 672.1,343.8" fill="none" stroke="#5a79a8" stroke-width="1.3" stroke-linejoin="round"/></g></svg>
<div style="left:359px;top:127px;width:38px;height:171.5px;background:rgba(28,28,28,.93);border-radius:3.500px"></div>
<div style="left:371.5px;top:132.7px;width:13.5px;height:1px;background:#5a5a5a"></div><div style="left:371.5px;top:135.3px;width:13.5px;height:1px;background:#5a5a5a"></div>
<div class="" style="left:361.2px;top:142.6px;width:33px;height:18.4px;border-radius:2px 2px 0 0;background:#4e4e4e"><svg style="left:10px;top:2.700000000000003px;" width="13" height="13" viewBox="0 0 13 13"><path d="M3.600 7V2.800a.750.750 0 0 1 1.500 0V1.600a.750.750 0 0 1 1.500 0V1.300a.750.750 0 0 1 1.500 0V2a.750.750 0 0 1 1.500 0V7.400L10.800 5.600a.700.700 0 0 1 1.200.700C11.200 8.400 10.400 10.600 9 12H4.800C3.200 10.600 1.800 8.600 1 6.600a.700.700 0 0 1 1.200-.600Z" fill="#d0d0d0"/><path d="M5.100 2.800V6.500M6.600 2V6.500M8.100 2V6.500" stroke="#4e4e4e" stroke-width=".45"/></svg></div>
<div class="" style="left:361.2px;top:162px;width:33px;height:17.3px;border-radius:0;background:#4e4e4e"><svg style="left:10px;top:2.1500000000000057px;" width="13" height="13" viewBox="0 0 13 13"><path d="M6.5 0 8.4 2.2H4.6ZM6.5 13 4.6 10.800H8.4ZM0 6.500 2.200 4.600V8.400ZM13 6.500 10.800 8.400V4.600Z" fill="#c8c8c8"/><path d="M6.500 2V11M2 6.500H11" stroke="#c8c8c8" stroke-width="1" stroke-dasharray="2.2 1.600"/></svg></div>
<div class="" style="left:361.2px;top:180.3px;width:33px;height:17.7px;border-radius:0;background:#4e4e4e"><svg style="left:10px;top:2.3499999999999943px;" width="13" height="13" viewBox="0 0 13 13"><path d="M10.800 4A5 5 0 0 0 2 5.500M2.200 9A5 5 0 0 0 11 7.500" fill="none" stroke="#c8c8c8" stroke-width="1.100"/><path d="M11.800 1.200V4.800H8.200ZM1.200 11.800V8.200H4.800Z" fill="#c8c8c8"/></svg></div>
<div class="" style="left:361.2px;top:199px;width:33px;height:17.8px;border-radius:0;background:#4e4e4e"><svg style="left:10px;top:2.4000000000000057px;" width="13" height="13" viewBox="0 0 13 13"><rect x="1" y="1" width="11" height="11" fill="none" stroke="#c8c8c8" stroke-width="1.100"/><rect x="1" y="8" width="4" height="4" fill="none" stroke="#c8c8c8" stroke-width="1"/><path d="M5.500 7.500 10 3M7 3H10V6" fill="none" stroke="#c8c8c8" stroke-width="1.100"/></svg></div>
<div class="sbb" style="left:361.2px;top:217.9px;width:33px;height:17.7px;border-radius:0;background:#46607c"><svg style="left:10px;top:2.3499999999999943px;" width="13" height="13" viewBox="0 0 13 13"><rect x="1.800" y="1.800" width="9.400" height="9.400" fill="none" stroke="#f0f0f0" stroke-width="1"/><path d="M.5.500H3V3H.5ZM10 .5H12.500V3H10ZM.5 10H3V12.500H.5ZM10 10H12.500V12.500H10Z" fill="#f0f0f0"/></svg></div>
<div class="" style="left:361.2px;top:236.7px;width:33px;height:17.5px;border-radius:0 0 2px 2px;background:#4e4e4e"><svg style="left:10px;top:2.25px;" width="13" height="13" viewBox="0 0 13 13"><circle cx="6.500" cy="6.500" r="4.600" fill="none" stroke="#c8c8c8" stroke-width="1"/><path d="M6.500 1V12M1 6.500H12" stroke="#c8c8c8" stroke-width="1"/><path d="M0 0H2.500L0 2.500ZM13 0H10.500L13 2.500ZM0 13H2.500L0 10.500ZM13 13H10.500L13 10.500Z" fill="#c8c8c8"/></svg></div>
<div class="" style="left:361.2px;top:277.8px;width:33px;height:17.4px;border-radius:2px;background:#4e4e4e"><svg style="left:10px;top:2.1999999999999886px;" width="13" height="13" viewBox="0 0 13 13"><path d="M2.400 10.500 6 2.600 10.500 8" fill="none" stroke="#c8c8c8" stroke-width="1.100"/><rect x="4.800" y="1" width="2.600" height="2.600" fill="#454545" stroke="#c8c8c8" stroke-width=".9"/><rect x="1" y="9.400" width="2.600" height="2.600" fill="#454545" stroke="#c8c8c8" stroke-width=".9"/><rect x="9.400" y="7" width="2.600" height="2.600" fill="#454545" stroke="#c8c8c8" stroke-width=".9"/></svg></div>
<div style="left:372.7px;top:260.4px;width:10.6px;height:10.6px;border:2.6px solid #b6f13f;background:#101010"></div>
<!--proj-->
<div class="panel" style="left:49px;top:518px;width:924px;height:366px;background:#383838"></div>
<div style="left:49px;top:518px;width:924px;height:17px;background:#282828"></div>
<div style="left:49px;top:518px;width:72px;height:17px;background:#3c3c3c;border-radius:0 3px 0 0"></div>
<svg style="left:55.8px;top:522px;" width="11.5" height="9.5" viewBox="0 0 11.5 9.5"><path d="M0 1.2A1.200 1.200 0 0 1 1.200 0H4.300L5.600 1.600H10.300A1.200 1.200 0 0 1 11.500 2.800V8.300A1.200 1.200 0 0 1 10.300 9.500H1.200A1.200 1.200 0 0 1 0 8.300Z" fill="#c8c8c8"/></svg>
<span class="t" style="left:70.4px;top:520.3px" id="ptab">Project</span>
<svg style="left:130px;top:522px;" width="9" height="10" viewBox="0 0 9 10"><rect x=".5" y=".5" width="8" height="9" rx="1" fill="#c8c8c8"/><path d="M2 3H7M2 5H7M2 7H5.500" stroke="#282828" stroke-width="1"/></svg>
<span class="t" style="left:143.4px;top:520.3px" id="ctab">Console</span>
<svg style="left:943px;top:521.8px;" width="8" height="9.5" viewBox="0 0 8 9.5"><rect x=".65" y="4.6" width="6.5" height="4.2" rx=".9" fill="none" stroke="#c4c4c4" stroke-width="1.3"/><path d="M6.500 4.600V2.900a2.300 2.300 0 0 0-4.400-.7" fill="none" stroke="#c4c4c4" stroke-width="1.200"/></svg>
<svg style="left:960px;top:522px;" width="3" height="9" viewBox="0 0 3 9"><rect x=".4" y=".1" width="2.2" height="2.1" rx=".5" fill="#c4c4c4"/><rect x=".4" y="3.4" width="2.2" height="2.1" rx=".5" fill="#c4c4c4"/><rect x=".4" y="6.7" width="2.2" height="2.1" rx=".5" fill="#c4c4c4"/></svg>
<div style="left:49px;top:535px;width:924px;height:18px;background:#3c3c3c"></div>
<div style="left:49px;top:553px;width:924px;height:1px;background:#232323"></div>
<svg style="left:56px;top:538.5px;" width="11" height="11" viewBox="0 0 11 11"><path d="M5.500 0V11M0 5.500H11" stroke="#d2d2d2" stroke-width="1.600"/></svg>
<svg style="left:71px;top:542.5px" width="6.5" height="4" viewBox="0 0 6.5 4"><path d="M0 0H6.5L3.25 4Z" fill="#c4c4c4"/></svg>
<div style="left:558.5px;top:537.500px;width:282px;height:13.500px;background:#3c3c3c;border:1px solid #242424;border-radius:3px"><div style="left:0;top:0;width:267px;height:11.500px;background:#2a2a2a;border-radius:2px 0 0 2px"></div><svg style="left:4px;top:3px;" width="7" height="7" viewBox="0 0 7 7"><circle cx="2.600" cy="2.600" r="2" fill="none" stroke="#c0c0c0" stroke-width="1"/><path d="M4 4 6.200 6.200" stroke="#c0c0c0" stroke-width="1.100"/></svg></div>
<div style="left:843.5px;top:535px;width:1px;height:18px;background:#303030"></div>
<div style="left:866.5px;top:535px;width:1px;height:18px;background:#303030"></div>
<div style="left:889.7px;top:535px;width:1px;height:18px;background:#303030"></div>
<div style="left:912.7px;top:535px;width:1px;height:18px;background:#303030"></div>
<div style="left:936.3px;top:535px;width:1px;height:18px;background:#303030"></div>
<svg style="left:828px;top:538.3px;" width="11" height="10" viewBox="0 0 11 10"><rect x="2.600" y=".6" width="7.800" height="6.400" fill="none" stroke="#c4c4c4" stroke-width="1"/><rect x=".5" y="5.200" width="4" height="4" fill="#3c3c3c" stroke="#c4c4c4" stroke-width="1"/><path d="M5 5 8 2.400M6 2.200H8.300V4.400" stroke="#c4c4c4" stroke-width=".9" fill="none"/></svg>
<svg style="left:848.5px;top:537.8px;" width="12" height="11.5" viewBox="0 0 12 11.5"><rect x="2" y="0" width="4.600" height="4.600" fill="#c8c8c8"/><circle cx="3.400" cy="8.200" r="3.200" fill="#c8c8c8"/><path d="M8.500 2.500 11.800 8H6Z" fill="#c8c8c8"/></svg>
<svg style="left:871px;top:538.3px;" width="11" height="10" viewBox="0 0 11 10"><path d="M5.500 0H11V5.500L5.500 10 1 5.500Z" fill="#c8c8c8" transform="rotate(8 5.500 5)"/><circle cx="8.300" cy="2.800" r="1.100" fill="#3c3c3c"/></svg>
<svg style="left:894.5px;top:538px;" width="11.5" height="11.5" viewBox="0 0 11.5 11.5"><circle cx="5.750" cy="5.750" r="5.750" fill="#c8c8c8"/><path d="M5.750 2.200V6.600" stroke="#3c3c3c" stroke-width="1.800"/><circle cx="5.750" cy="8.800" r="1" fill="#3c3c3c"/></svg>
<svg style="left:918.5px;top:538px;" width="12" height="11.5" viewBox="0 0 12 11.5"><path d="M6 0 7.800 4H12L8.600 6.800 9.900 11.200 6 8.600 2.100 11.200 3.400 6.800 0 4H4.200Z" fill="#8a8a8a"/></svg>
<svg style="left:941.5px;top:538.5px;" width="14" height="10.5" viewBox="0 0 14 10.5"><path d="M.6 5.200Q7-1.500 13.400 5.200 7 12 .6 5.200Z" fill="none" stroke="#c8c8c8" stroke-width="1.100"/><circle cx="7" cy="5.200" r="1.800" fill="#c8c8c8"/><path d="M2.400 10 11.600 .4" stroke="#c8c8c8" stroke-width="1.200"/></svg>
<span class="t" style="left:955.5px;top:537.5px" id="n26">26</span>
<div style="left:383px;top:554px;width:12px;height:330px;background:#343434"></div>
<div style="left:395px;top:554px;width:1.300px;height:330px;background:#242424"></div>
<div style="left:385.3px;top:568px;width:8.600px;height:174px;background:#5f5f5f;border-radius:4.300px"></div>
<svg style="left:386.5px;top:558.5px;" width="7" height="4" viewBox="0 0 7 4"><path d="M0 4H7L3.500 0Z" fill="#c4c4c4"/></svg>
<svg style="left:386.5px;top:873px" width="7" height="4" viewBox="0 0 7 4"><path d="M0 0H7L3.5 4Z" fill="#c4c4c4"/></svg>
<div style="left:49px;top:680.900px;width:334px;height:14.200px;background:#4d4d4d"></div>
<svg style="left:53.8px;top:558.1px" width="7.5" height="5.5" viewBox="0 0 7.5 5.5"><path d="M0 0H7.5L3.75 5.5Z" fill="#6e6e6e"/></svg>
<svg style="left:66.4px;top:555.4px;" width="10" height="9.6" viewBox="0 0 10 9.6"><path d="M5 0 6.500 3.300 10 3.600 7.300 5.900 8.200 9.500 5 7.600 1.800 9.500 2.700 5.900 0 3.600 3.500 3.300Z" fill="#d8d8d8"/></svg>
<span class="t b" id="p0" style="left:80.8px;top:553.4px;color:#dadada">Favorites</span>
<svg style="left:78px;top:569.5000000000001px;" width="11" height="11" viewBox="0 0 11 11"><circle cx="4.300" cy="4.300" r="3.500" fill="none" stroke="#c8c8c8" stroke-width="1.100"/><path d="M6.900 6.900 10.400 10.400" stroke="#c8c8c8" stroke-width="1.400"/></svg>
<span class="t" id="p1" style="left:92.7px;top:567.6px">All Materials</span>
<svg style="left:78px;top:583.7px;" width="11" height="11" viewBox="0 0 11 11"><circle cx="4.300" cy="4.300" r="3.500" fill="none" stroke="#c8c8c8" stroke-width="1.100"/><path d="M6.900 6.900 10.400 10.400" stroke="#c8c8c8" stroke-width="1.400"/></svg>
<span class="t" id="p2" style="left:92.7px;top:581.8px">All Models</span>
<svg style="left:78px;top:597.9000000000001px;" width="11" height="11" viewBox="0 0 11 11"><circle cx="4.300" cy="4.300" r="3.500" fill="none" stroke="#c8c8c8" stroke-width="1.100"/><path d="M6.900 6.900 10.400 10.400" stroke="#c8c8c8" stroke-width="1.400"/></svg>
<span class="t" id="p3" style="left:92.7px;top:596.0px">All Prefabs</span>
<svg style="left:53.8px;top:629.1px" width="7.5" height="5.5" viewBox="0 0 7.5 5.5"><path d="M0 0H7.5L3.75 5.5Z" fill="#6e6e6e"/></svg>
<svg style="left:65.8px;top:626.9px;" width="12.6" height="9.5" viewBox="0 0 12.6 9.5"><path d="M0 1.2A1.200 1.200 0 0 1 1.200 0H4.300L5.600 1.600H9.300A1.200 1.200 0 0 1 10.500 2.800V3.600H3.200L.9 8.600H0Z" fill="#c8c8c8"/><path d="M3.600 4.400H12.600L10.300 9.500H1.200Z" fill="#c8c8c8"/></svg>
<span class="t b" id="p5" style="left:80.8px;top:624.4px;color:#dadada">Assets</span>
<svg style="left:78px;top:641.0999999999999px;" width="12.6" height="9.5" viewBox="0 0 12.6 9.5"><path d="M0 1.2A1.200 1.200 0 0 1 1.200 0H4.300L5.600 1.600H10.300A1.200 1.200 0 0 1 11.500 2.800V8.300A1.200 1.200 0 0 1 10.300 9.500H1.200A1.200 1.200 0 0 1 0 8.300Z" fill="#c8c8c8"/></svg>
<span class="t" id="p6" style="left:92.7px;top:638.6px">Scenes</span>
<svg style="left:65.9px;top:657.5px" width="7.5" height="5.5" viewBox="0 0 7.5 5.5"><path d="M0 0H7.5L3.75 5.5Z" fill="#6e6e6e"/></svg>
<svg style="left:78px;top:655.3px;" width="12.6" height="9.5" viewBox="0 0 12.6 9.5"><path d="M0 1.2A1.200 1.200 0 0 1 1.200 0H4.300L5.600 1.600H9.300A1.200 1.200 0 0 1 10.500 2.800V3.600H3.200L.9 8.600H0Z" fill="#c8c8c8"/><path d="M3.600 4.400H12.600L10.300 9.500H1.200Z" fill="#c8c8c8"/></svg>
<span class="t" id="p7" style="left:92.7px;top:652.8px">Scripts</span>
<svg style="left:90.5px;top:669.5px;" width="12.6" height="9.5" viewBox="0 0 12.6 9.5"><path d="M0 1.2A1.200 1.200 0 0 1 1.200 0H4.300L5.600 1.600H10.300A1.200 1.200 0 0 1 11.500 2.800V8.300A1.200 1.200 0 0 1 10.300 9.500H1.200A1.200 1.200 0 0 1 0 8.300Z" fill="#c8c8c8"/></svg>
<span class="t" id="p8" style="left:105px;top:667.0px">Gameplay</span>
<svg style="left:65.9px;top:685.9px" width="7.5" height="5.5" viewBox="0 0 7.5 5.5"><path d="M0 0H7.5L3.75 5.5Z" fill="#6e6e6e"/></svg>
<svg style="left:78px;top:683.6999999999999px;" width="12.6" height="9.5" viewBox="0 0 12.6 9.5"><path d="M0 1.2A1.200 1.200 0 0 1 1.200 0H4.300L5.600 1.600H9.300A1.200 1.200 0 0 1 10.500 2.800V3.600H3.200L.9 8.600H0Z" fill="#c8c8c8"/><path d="M3.600 4.400H12.600L10.300 9.500H1.200Z" fill="#c8c8c8"/></svg>
<span class="t" id="p9" style="left:92.7px;top:681.2px">Settings</span>
<svg style="left:90.5px;top:697.9px;" width="12.6" height="9.5" viewBox="0 0 12.6 9.5"><path d="M0 1.2A1.200 1.200 0 0 1 1.200 0H4.300L5.600 1.600H10.300A1.200 1.200 0 0 1 11.500 2.800V8.300A1.200 1.200 0 0 1 10.300 9.500H1.200A1.200 1.200 0 0 1 0 8.300Z" fill="#c8c8c8"/></svg>
<span class="t" id="p10" style="left:105px;top:695.4px">Scenes</span>
<svg style="left:67.4px;top:713.3px" width="5.5" height="7" viewBox="0 0 5.5 7"><path d="M0 0V7L5.5 3.5Z" fill="#6e6e6e"/></svg>
<svg style="left:78px;top:712.0999999999999px;" width="12.6" height="9.5" viewBox="0 0 12.6 9.5"><path d="M0 1.2A1.200 1.200 0 0 1 1.200 0H4.300L5.600 1.600H10.300A1.200 1.200 0 0 1 11.500 2.800V8.300A1.200 1.200 0 0 1 10.300 9.500H1.200A1.200 1.200 0 0 1 0 8.300Z" fill="#c8c8c8"/></svg>
<span class="t" id="p11" style="left:92.7px;top:709.6px">Textures</span>
<svg style="left:67.4px;top:727.5px" width="5.5" height="7" viewBox="0 0 5.5 7"><path d="M0 0V7L5.5 3.5Z" fill="#6e6e6e"/></svg>
<svg style="left:78px;top:726.3px;" width="12.6" height="9.5" viewBox="0 0 12.6 9.5"><path d="M0 1.2A1.200 1.200 0 0 1 1.200 0H4.300L5.600 1.600H10.300A1.200 1.200 0 0 1 11.500 2.800V8.300A1.200 1.200 0 0 1 10.300 9.500H1.200A1.200 1.200 0 0 1 0 8.300Z" fill="#c8c8c8"/></svg>
<span class="t" id="p12" style="left:92.7px;top:723.8px">Tile Palettes</span>
<svg style="left:53.8px;top:742.7px" width="7.5" height="5.5" viewBox="0 0 7.5 5.5"><path d="M0 0H7.5L3.75 5.5Z" fill="#6e6e6e"/></svg>
<svg style="left:65.8px;top:740.5px;" width="12.6" height="9.5" viewBox="0 0 12.6 9.5"><path d="M0 1.2A1.200 1.200 0 0 1 1.200 0H4.300L5.600 1.600H9.300A1.200 1.200 0 0 1 10.500 2.800V3.600H3.200L.9 8.600H0Z" fill="#c8c8c8"/><path d="M3.600 4.400H12.600L10.300 9.500H1.200Z" fill="#c8c8c8"/></svg>
<span class="t b" id="p13" style="left:80.8px;top:738.0px;color:#dadada">Packages</span>
<svg style="left:67.4px;top:755.9px" width="5.5" height="7" viewBox="0 0 5.5 7"><path d="M0 0V7L5.5 3.5Z" fill="#6e6e6e"/></svg>
<svg style="left:78px;top:754.6999999999999px;" width="12.6" height="9.5" viewBox="0 0 12.6 9.5"><path d="M0 1.2A1.200 1.200 0 0 1 1.200 0H4.300L5.600 1.600H10.300A1.200 1.200 0 0 1 11.500 2.800V8.300A1.200 1.200 0 0 1 10.300 9.500H1.200A1.200 1.200 0 0 1 0 8.300Z" fill="#c8c8c8"/></svg>
<span class="t" id="p14" style="left:92.7px;top:752.2px">2D Animation</span>
<svg style="left:67.4px;top:770.1px" width="5.5" height="7" viewBox="0 0 5.5 7"><path d="M0 0V7L5.5 3.5Z" fill="#6e6e6e"/></svg>
<svg style="left:78px;top:768.9px;" width="12.6" height="9.5" viewBox="0 0 12.6 9.5"><path d="M0 1.2A1.200 1.200 0 0 1 1.200 0H4.300L5.600 1.600H10.300A1.200 1.200 0 0 1 11.500 2.800V8.300A1.200 1.200 0 0 1 10.300 9.500H1.200A1.200 1.200 0 0 1 0 8.300Z" fill="#c8c8c8"/></svg>
<span class="t" id="p15" style="left:92.7px;top:766.4px">2D Aseprite Importer</span>
<svg style="left:67.4px;top:784.3px" width="5.5" height="7" viewBox="0 0 5.5 7"><path d="M0 0V7L5.5 3.5Z" fill="#6e6e6e"/></svg>
<svg style="left:78px;top:783.0999999999999px;" width="12.6" height="9.5" viewBox="0 0 12.6 9.5"><path d="M0 1.2A1.200 1.200 0 0 1 1.200 0H4.300L5.600 1.600H10.300A1.200 1.200 0 0 1 11.500 2.800V8.300A1.200 1.200 0 0 1 10.300 9.500H1.200A1.200 1.200 0 0 1 0 8.300Z" fill="#c8c8c8"/></svg>
<span class="t" id="p16" style="left:92.7px;top:780.6px">2D Common</span>
<svg style="left:67.4px;top:798.5px" width="5.5" height="7" viewBox="0 0 5.5 7"><path d="M0 0V7L5.5 3.5Z" fill="#6e6e6e"/></svg>
<svg style="left:78px;top:797.3px;" width="12.6" height="9.5" viewBox="0 0 12.6 9.5"><path d="M0 1.2A1.200 1.200 0 0 1 1.200 0H4.300L5.600 1.600H10.300A1.200 1.200 0 0 1 11.500 2.800V8.300A1.200 1.200 0 0 1 10.300 9.500H1.200A1.200 1.200 0 0 1 0 8.300Z" fill="#c8c8c8"/></svg>
<span class="t" id="p17" style="left:92.7px;top:794.8px">2D Pixel Perfect</span>
<svg style="left:67.4px;top:812.7px" width="5.5" height="7" viewBox="0 0 5.5 7"><path d="M0 0V7L5.5 3.5Z" fill="#6e6e6e"/></svg>
<svg style="left:78px;top:811.5px;" width="12.6" height="9.5" viewBox="0 0 12.6 9.5"><path d="M0 1.2A1.200 1.200 0 0 1 1.200 0H4.300L5.600 1.600H10.300A1.200 1.200 0 0 1 11.500 2.800V8.300A1.200 1.200 0 0 1 10.300 9.500H1.200A1.200 1.200 0 0 1 0 8.300Z" fill="#c8c8c8"/></svg>
<span class="t" id="p18" style="left:92.7px;top:809.0px">2D PSD Importer</span>
<svg style="left:67.4px;top:826.9000000000001px" width="5.5" height="7" viewBox="0 0 5.5 7"><path d="M0 0V7L5.5 3.5Z" fill="#6e6e6e"/></svg>
<svg style="left:78px;top:825.7px;" width="12.6" height="9.5" viewBox="0 0 12.6 9.5"><path d="M0 1.2A1.200 1.200 0 0 1 1.200 0H4.300L5.600 1.600H10.300A1.200 1.200 0 0 1 11.500 2.800V8.300A1.200 1.200 0 0 1 10.300 9.500H1.200A1.200 1.200 0 0 1 0 8.300Z" fill="#c8c8c8"/></svg>
<span class="t" id="p19" style="left:92.7px;top:823.2px">2D Sprite</span>
<svg style="left:67.4px;top:841.1px" width="5.5" height="7" viewBox="0 0 5.5 7"><path d="M0 0V7L5.5 3.5Z" fill="#6e6e6e"/></svg>
<svg style="left:78px;top:839.9px;" width="12.6" height="9.5" viewBox="0 0 12.6 9.5"><path d="M0 1.2A1.200 1.200 0 0 1 1.200 0H4.300L5.600 1.600H10.300A1.200 1.200 0 0 1 11.500 2.800V8.300A1.200 1.200 0 0 1 10.300 9.500H1.200A1.200 1.200 0 0 1 0 8.300Z" fill="#c8c8c8"/></svg>
<span class="t" id="p20" style="left:92.7px;top:837.4px">2D SpriteShape</span>
<svg style="left:67.4px;top:855.3px" width="5.5" height="7" viewBox="0 0 5.5 7"><path d="M0 0V7L5.5 3.5Z" fill="#6e6e6e"/></svg>
<svg style="left:78px;top:854.0999999999999px;" width="12.6" height="9.5" viewBox="0 0 12.6 9.5"><path d="M0 1.2A1.200 1.200 0 0 1 1.200 0H4.300L5.600 1.600H10.300A1.200 1.200 0 0 1 11.500 2.800V8.300A1.200 1.200 0 0 1 10.300 9.500H1.200A1.200 1.200 0 0 1 0 8.300Z" fill="#c8c8c8"/></svg>
<span class="t" id="p21" style="left:92.7px;top:851.6px">2D Tilemap Editor</span>
<svg style="left:67.4px;top:869.5px" width="5.5" height="7" viewBox="0 0 5.5 7"><path d="M0 0V7L5.5 3.5Z" fill="#6e6e6e"/></svg>
<svg style="left:78px;top:868.3px;" width="12.6" height="9.5" viewBox="0 0 12.6 9.5"><path d="M0 1.2A1.200 1.200 0 0 1 1.200 0H4.300L5.600 1.600H10.300A1.200 1.200 0 0 1 11.500 2.800V8.300A1.200 1.200 0 0 1 10.300 9.500H1.200A1.200 1.200 0 0 1 0 8.300Z" fill="#c8c8c8"/></svg>
<span class="t" id="p22" style="left:92.7px;top:865.8px">2D Tilemap Extras</span>
<svg style="left:67.4px;top:883.7px" width="5.5" height="7" viewBox="0 0 5.5 7"><path d="M0 0V7L5.5 3.5Z" fill="#6e6e6e"/></svg>
<svg style="left:78px;top:882.5px;" width="12.6" height="9.5" viewBox="0 0 12.6 9.5"><path d="M0 1.2A1.200 1.200 0 0 1 1.200 0H4.300L5.600 1.600H10.300A1.200 1.200 0 0 1 11.500 2.800V8.300A1.200 1.200 0 0 1 10.300 9.500H1.200A1.200 1.200 0 0 1 0 8.300Z" fill="#c8c8c8"/></svg>
<span class="t" id="p23" style="left:92.7px;top:880.0px">Burst</span>
<div style="left:396px;top:554px;width:577px;height:19px;background:#3e3e3e"></div>
<div style="left:396px;top:573px;width:577px;height:292px;background:#333333"></div>
<span class="t" style="left:399px;top:555.500px;color:#b0b0b0" id="bc1">Assets</span><span class="t" style="left:437.5px;top:555.500px;color:#b0b0b0">&gt;</span><span class="t b" style="left:448.500px;top:555.500px;color:#d6d6d6" id="bc2">Settings</span>
<svg style="left:396px;top:573px" width="577" height="292" viewBox="396 573 577 292"><defs><linearGradient id="mg" x1="0" y1="0" x2="1" y2="1"><stop offset="0" stop-color="#ffffff"/><stop offset="1" stop-color="#e6e6e6"/></linearGradient><linearGradient id="bg2" x1="0" y1="0" x2="0" y2="1"><stop offset="0" stop-color="#1cb4d9"/><stop offset="1" stop-color="#188ad6"/></linearGradient></defs><polygon points="422.2,598 446.8,591.4 446.8,643.2 422.2,650.9" fill="url(#mg)"/><polygon points="446.8,591.4 473.1,598 473.1,650.9 446.8,643.2" fill="#adadad"/><polygon points="473.1,598 496.9,591.4 496.9,643.2 473.1,650.9" fill="url(#mg)"/><polygon points="485.4,611.1 468.2,634.1 480.5,635.8 477.2,657.1 494.5,635 483.8,633.3 486,611.100" fill="url(#bg2)"/><circle cx="502.7" cy="623" r="10" fill="#a9a9a9"/><circle cx="502.7" cy="623" r="8" fill="#dddddd"/><path d="M499.7 618.5V627.5L507.7 623Z" fill="#555"/><path d="M544 586.5H583.5L599 602.0V657.5a4 4 0 0 1-4 4H544a4 4 0 0 1-4-4V590.5a4 4 0 0 1 4-4Z" fill="#efefef"/><polygon points="569.2,647.500 555.500,640 555.500,624 569.200,617 583,624 583,640" fill="#0c67d0"/><polygon points="569.2,614.500 583,621.500 583,629.500 569.200,636.500 555.500,629.500 555.500,621.500" fill="#74a9e2"/><polygon points="569.2,604.2 591,616 591,643.2 569.2,654.800 547.4,643.2 547.4,616" fill="none" stroke="#535353" stroke-width="4.600" stroke-linejoin="round"/><path d="M547.4 616 569.2 627.600 591 616M569.2 627.600V654.800" fill="none" stroke="#535353" stroke-width="4.600"/><rect x="640.6" y="598.6" width="86.500" height="49.400" fill="#464646"/><path d="M662.500 625.500c-1.500-2 .5-4 3-3.500l1-3 2.500.5.500 2.500c3-.5 6 1 6.500 4l-2 .5-.5 1.500h-9Z" fill="#f4f4f4"/><circle cx="700" cy="622" r="4" fill="#f4f4f4"/><path d="M697.800 626.500h4.400l-2.200 2.500Z" fill="#f4f4f4"/><circle cx="726.7" cy="623.3" r="10" fill="#a9a9a9"/><circle cx="726.7" cy="623.3" r="8" fill="#dddddd"/><path d="M723.7 618.8V627.8L731.7 623.3Z" fill="#555"/><path d="M768 586.8H811.5L828 603.3V657.3a4 4 0 0 1-4 4H768a4 4 0 0 1-4-4V590.8a4 4 0 0 1 4-4Z" fill="#efefef"/><clipPath id="sc1"><circle cx="796.2" cy="628" r="16.8"/></clipPath><path d="M776.7 646.8H796.2" stroke="#515151" stroke-width="4.400" stroke-linecap="round" fill="none"/><circle cx="796.2" cy="628" r="18.8" fill="#0c67d0" stroke="#515151" stroke-width="4.400"/><g clip-path="url(#sc1)"><circle cx="800.4000000000001" cy="624.4" r="15.200000000000001" fill="#7fb0e4"/><ellipse cx="802.7" cy="619" rx="7" ry="4.300" transform="rotate(38 802.7 619)" fill="#f2f2f2"/></g><path d="M875.600 601.400a4 4 0 0 1 4-4H900.500a4 4 0 0 1 3 1.500L909.500 608H936a4 4 0 0 1 4 4V647a4 4 0 0 1-4 4H879.600a4 4 0 0 1-4-4Z" fill="#c2c2c2"/><path d="M432 698H476.5L492 713.5V768.6a4 4 0 0 1-4 4H432a4 4 0 0 1-4-4V702a4 4 0 0 1 4-4Z" fill="#efefef"/><clipPath id="sc2"><circle cx="460" cy="734.4" r="16.3"/></clipPath><path d="M440.5 752.6999999999999H460" stroke="#515151" stroke-width="4.400" stroke-linecap="round" fill="none"/><circle cx="460" cy="734.4" r="18.3" fill="#0c67d0" stroke="#515151" stroke-width="4.400"/><g clip-path="url(#sc2)"><circle cx="464.2" cy="730.8" r="14.700000000000001" fill="#7fb0e4"/><ellipse cx="466.5" cy="725.4" rx="7" ry="4.300" transform="rotate(38 466.5 725.4)" fill="#f2f2f2"/></g><polygon points="475.6,736.8 482.2,736.8 482.4,741.8 487.1,744.5 491.5,742.2 494.8,748.0 490.6,750.6 490.6,756.0 494.8,758.6 491.5,764.4 487.1,762.1 482.4,764.8 482.2,769.8 475.6,769.8 475.4,764.8 470.7,762.1 466.3,764.4 463.0,758.6 467.2,756.0 467.2,750.6 463.0,748.0 466.3,742.2 470.7,744.5 475.4,741.8" fill="#c2c2c2" stroke="#323232" stroke-width="7" stroke-linejoin="round" paint-order="stroke"/><polygon points="475.6,736.8 482.2,736.8 482.4,741.8 487.1,744.5 491.5,742.2 494.8,748.0 490.6,750.6 490.6,756.0 494.8,758.6 491.5,764.4 487.1,762.1 482.4,764.8 482.2,769.8 475.6,769.8 475.4,764.8 470.7,762.1 466.3,764.4 463.0,758.6 467.2,756.0 467.2,750.6 463.0,748.0 466.3,742.2 470.7,744.5 475.4,741.8" fill="#c2c2c2"/><circle cx="478.9" cy="753.3" r="6.600" fill="#323232"/><path d="M544 698H588.7L604.2 713.5V768.6a4 4 0 0 1-4 4H544a4 4 0 0 1-4-4V702a4 4 0 0 1 4-4Z" fill="#efefef"/><clipPath id="sc3"><circle cx="571.7" cy="739.3" r="16.8"/></clipPath><path d="M552.2 758.0999999999999H571.7" stroke="#515151" stroke-width="4.400" stroke-linecap="round" fill="none"/><circle cx="571.7" cy="739.3" r="18.8" fill="#0c67d0" stroke="#515151" stroke-width="4.400"/><g clip-path="url(#sc3)"><circle cx="575.9000000000001" cy="735.6999999999999" r="15.200000000000001" fill="#7fb0e4"/><ellipse cx="578.2" cy="730.3" rx="7" ry="4.300" transform="rotate(38 578.2 730.3)" fill="#f2f2f2"/></g></svg>
<span class="t" id="lb0" style="left:400px;width:120px;text-align:center;top:667.4px;font-size:9.2px;color:#c0c0c0">Controls</span>
<span class="t" id="lb1" style="left:511.9px;width:120px;text-align:center;top:667.4px;font-size:9.2px;color:#c0c0c0">DefaultVolumePro...</span>
<span class="t" id="lb2" style="left:631px;width:120px;text-align:center;top:667.4px;font-size:9.2px;color:#c0c0c0">Lit2DSceneTe...</span>
<span class="t" id="lb3" style="left:736px;width:120px;text-align:center;top:667.4px;font-size:9.2px;color:#c0c0c0">Renderer2D</span>
<span class="t" id="lb4" style="left:848.5px;width:120px;text-align:center;top:667.4px;font-size:9.2px;color:#c0c0c0">Scenes</span>
<span class="t" id="lb5" style="left:400px;width:120px;text-align:center;top:778.3px;font-size:9.2px;color:#c0c0c0">UniversalRenderPi...</span>
<span class="t" id="lb6" style="left:512px;width:120px;text-align:center;top:778.3px;font-size:9.2px;color:#c0c0c0">UniversalRP</span>
<svg style="left:646px;top:669px;" width="10" height="10" viewBox="0 0 10 10"><path d="M1 1H6L7.500 2.500V5H4V9H1Z" fill="#8a8a8a"/><circle cx="7" cy="7.200" r="2.600" fill="#dcdcdc"/><circle cx="7" cy="7.200" r="1" fill="#333"/></svg>
<div style="left:396px;top:865px;width:577px;height:19px;background:#3e3e3e"></div>
<div style="left:909px;top:874px;width:45px;height:1px;background:#6a6a6a"></div>
<div style="left:949.500px;top:870px;width:9px;height:9px;border-radius:50%;background:#c4c4c4"></div>
<!--insp-->
<div class="panel" style="left:975px;top:85px;width:376px;height:799px;background:#383838"></div>
<div style="left:975px;top:85px;width:376px;height:17px;background:#282828"></div>
<div style="left:975px;top:85px;width:83.500px;height:17px;background:#3c3c3c;border-radius:0 3px 0 0"></div>
<svg style="left:983px;top:89px;" width="9.5" height="9.5" viewBox="0 0 9.5 9.5"><circle cx="4.750" cy="4.750" r="4.750" fill="#c8c8c8"/><path d="M4.750 4.200V7.600" stroke="#3c3c3c" stroke-width="1.500"/><circle cx="4.750" cy="2.600" r=".9" fill="#3c3c3c"/></svg>
<span class="t" style="left:996px;top:87.300px" id="itab">Inspector</span>
<svg style="left:1318.5px;top:88.8px;" width="8" height="9.5" viewBox="0 0 8 9.5"><rect x=".65" y="4.6" width="6.5" height="4.2" rx=".9" fill="none" stroke="#c4c4c4" stroke-width="1.3"/><path d="M6.500 4.600V2.900a2.300 2.300 0 0 0-4.400-.7" fill="none" stroke="#c4c4c4" stroke-width="1.200"/></svg>
<svg style="left:1336px;top:89px;" width="3" height="9" viewBox="0 0 3 9"><rect x=".4" y=".1" width="2.2" height="2.1" rx=".5" fill="#c4c4c4"/><rect x=".4" y="3.4" width="2.2" height="2.1" rx=".5" fill="#c4c4c4"/><rect x=".4" y="6.7" width="2.2" height="2.1" rx=".5" fill="#c4c4c4"/></svg>
<div style="left:1339px;top:102px;width:12px;height:752px;background:#353535"></div>
<div style="left:1341px;top:364px;width:8px;height:475px;background:#5f5f5f;border-radius:4px"></div>
<svg style="left:1341.5px;top:106.5px;" width="7" height="4" viewBox="0 0 7 4"><path d="M0 4H7L3.500 0Z" fill="#d0d0d0"/></svg>
<svg style="left:1341.5px;top:846px" width="7" height="4" viewBox="0 0 7 4"><path d="M0 0H7L3.5 4Z" fill="#d0d0d0"/></svg>
<svg style="left:981.7px;top:106.7px" width="6" height="8" viewBox="0 0 6 8"><path d="M0 0V8L6 4.0Z" fill="#6e6e6e"/></svg>
<span class="t" style="left:992px;top:103.5px">Info</span>
<div class="sep" style="left:975px;top:124.4px;width:364px;background:#1f1f1f"></div>
<div style="left:975px;top:125.4px;width:364px;height:18px;background:#3e3e3e"></div>
<div class="sep" style="left:975px;top:143.4px;width:364px;background:#303030"></div>
<svg style="left:980.7px;top:131.70000000000002px" width="7.4" height="6" viewBox="0 0 7.4 6"><path d="M0 0H7.4L3.7 6Z" fill="#6e6e6e"/></svg>
<div style="left:994px;top:128.8px;width:11.200px;height:11.200px;border:2.900px solid #95ef4a;background:#2b2b2b"></div>
<div style="left:1010.300px;top:128.20000000000002px;width:12.400px;height:12.400px;background:#2a2a2a;border:1px solid #1e1e1e;border-radius:2px"></div>
<svg style="left:1012.3px;top:131.0px;" width="8.5" height="7" viewBox="0 0 8.5 7"><path d="M.8 3.600 3.200 6 7.700 1" fill="none" stroke="#ececec" stroke-width="1.400"/></svg>
<span class="t b" id="hd0" style="left:1028px;top:127.10000000000001px;color:#dcdcdc;font-size:12.1px">Box Collider 2D</span>
<svg style="left:1287px;top:129.70000000000002px;" width="9.5" height="9.5" viewBox="0 0 9.5 9.5"><circle cx="4.750" cy="4.750" r="4.750" fill="#c4c4c4"/><path d="M3.300 3.800a1.500 1.500 0 1 1 2.200 1.300c-.6.300-.7.600-.7 1.200" fill="none" stroke="#3e3e3e" stroke-width="1.100"/><circle cx="4.750" cy="7.600" r=".7" fill="#3e3e3e"/></svg>
<svg style="left:1303.5px;top:129.70000000000002px;" width="10" height="10" viewBox="0 0 10 10"><path d="M0 2.600H10M0 7.400H10" stroke="#c4c4c4" stroke-width="1.100"/><path d="M6.300 .6V4.600M3.300 5.400V9.400" stroke="#c4c4c4" stroke-width="1.500"/></svg>
<svg style="left:1325.5px;top:129.9px;" width="3" height="9" viewBox="0 0 3 9"><rect x=".4" y=".1" width="2.2" height="2.1" rx=".5" fill="#c4c4c4"/><rect x=".4" y="3.4" width="2.2" height="2.1" rx=".5" fill="#c4c4c4"/><rect x=".4" y="6.7" width="2.2" height="2.1" rx=".5" fill="#c4c4c4"/></svg>
<span class="t" id="l_ec" style="left:992px;top:148.8px">Edit Collider</span>
<div style="left:1120.500px;top:149.500px;width:27px;height:19px;background:#383838;border:1px solid #242424;border-radius:3px"><svg style="left:6.5px;top:3.5px;" width="13" height="12" viewBox="0 0 13 12"><path d="M2.300 9.500 5.200 2.200H7.400L10.700 7.800" fill="none" stroke="#c4c4c4" stroke-width="1"/><rect x="4.800" y=".8" width="2.800" height="2.800" fill="#383838" stroke="#c4c4c4" stroke-width=".9"/><rect x=".8" y="8.400" width="2.800" height="2.800" fill="#383838" stroke="#c4c4c4" stroke-width=".9"/><rect x="9.400" y="6.400" width="2.800" height="2.800" fill="#383838" stroke="#c4c4c4" stroke-width=".9"/></svg></div>
<span class="t" style="left:992px;top:174.3px">Material</span>
<div class="fld" style="left:1121px;top:174.0px;width:214.0px"><span class="t" style="left:1.7px;top:-.7px">None (Physics Material 2D)</span></div><div style="left:1318px;top:175.0px;width:16px;height:13px;background:#333"></div><svg style="left:1321.5px;top:177.0px;" width="9" height="9" viewBox="0 0 9 9"><circle cx="4.500" cy="4.500" r="3.800" fill="none" stroke="#c4c4c4" stroke-width="1"/><circle cx="4.500" cy="4.500" r="1.400" fill="#c4c4c4"/></svg>
<span class="t" style="left:992px;top:192.0px">Is Trigger</span>
<div class="cb" style="left:1121px;top:193.2px"></div>
<span class="t" style="left:992px;top:209.8px">Used By Effector</span>
<div class="cb" style="left:1121px;top:211.0px"></div>
<span class="t" style="left:992px;top:227.6px">Auto Tiling</span>
<div class="cb" style="left:1121px;top:228.8px"></div>
<span class="t" id="l_co" style="left:992px;top:245.4px">Composite Operation</span>
<div class="dd" style="left:1121px;top:245.3px;width:214.0px;height:14.600px"><span class="t" style="left:3px;top:-.9px;color:#d2d2d2">None</span><svg style="left:200.5px;top:4.5px" width="7.5" height="4.2" viewBox="0 0 7.5 4.2"><path d="M0 0H7.5L3.75 4.2Z" fill="#d6d6d6"/></svg></div>
<span class="t" style="left:992px;top:263.2px">Offset</span>
<span class="t" style="left:1121.3px;top:263.2px">X</span>
<div class="fld" style="left:1134.3px;top:262.9px;width:54.7px"><span class="t" style="left:1.5px;top:-.7px">1.490116e</span></div>
<span class="t" style="left:1195px;top:263.2px">Y</span>
<div class="fld" style="left:1207px;top:262.9px;width:55.0px"><span class="t" style="left:1.5px;top:-.7px">0.414924<span style="position:static;display:inline-block;width:3.200px;overflow:hidden;vertical-align:top">5</span></span></div>
<span class="t" style="left:992px;top:281.0px">Size</span>
<span class="t" style="left:1121.3px;top:281.0px">X</span>
<div class="fld" style="left:1134.3px;top:280.7px;width:54.7px"><span class="t" style="left:1.5px;top:-.7px">0.504347</span></div>
<span class="t" style="left:1195px;top:281.0px">Y</span>
<div class="fld" style="left:1207px;top:280.7px;width:55.0px"><span class="t" style="left:1.5px;top:-.7px">0.819752<span style="position:static;display:inline-block;width:3.200px;overflow:hidden;vertical-align:top">5</span></span></div>
<span class="t" style="left:992px;top:298.8px">Edge Radius</span>
<div class="fld" style="left:1121px;top:298.5px;width:214.0px"><span class="t" style="left:2.7px;top:-.7px">0</span></div>
<svg style="left:981.7px;top:319.8px" width="6" height="8" viewBox="0 0 6 8"><path d="M0 0V8L6 4.0Z" fill="#6e6e6e"/></svg>
<span class="t" style="left:992px;top:316.6px">Layer Overrides</span>
<svg style="left:981.7px;top:336px" width="6" height="8" viewBox="0 0 6 8"><path d="M0 0V8L6 4.0Z" fill="#6e6e6e"/></svg>
<span class="t" style="left:992px;top:332.8px">Info</span>
<div class="sep" style="left:975px;top:354px;width:364px;background:#1f1f1f"></div>
<div style="left:975px;top:355px;width:364px;height:18px;background:#3e3e3e"></div>
<div class="sep" style="left:975px;top:373px;width:364px;background:#303030"></div>
<svg style="left:980.7px;top:361.3px" width="7.4" height="6" viewBox="0 0 7.4 6"><path d="M0 0H7.4L3.7 6Z" fill="#6e6e6e"/></svg>
<svg style="left:994.5px;top:357.8px;" width="10.5" height="12.5" viewBox="0 0 10.5 12.5"><path d="M0 1a1 1 0 0 1 1-1H7L10.500 3.500V11.500a1 1 0 0 1-1 1H1a1 1 0 0 1-1-1Z" fill="#ececec"/><path d="M4 3.800 3.400 9.400M7 3.800 6.400 9.400M1.800 5.500H8.600M1.600 7.800H8.400" stroke="#2f8a3a" stroke-width="1.100"/></svg>
<div style="left:1010.300px;top:357.8px;width:12.400px;height:12.400px;background:#2a2a2a;border:1px solid #1e1e1e;border-radius:2px"></div>
<svg style="left:1012.3px;top:360.6px;" width="8.5" height="7" viewBox="0 0 8.5 7"><path d="M.8 3.600 3.200 6 7.700 1" fill="none" stroke="#ececec" stroke-width="1.400"/></svg>
<span class="t b" id="hd1" style="left:1028px;top:356.7px;color:#dcdcdc;font-size:12.1px">Character Body (Script)</span>
<svg style="left:1287px;top:359.3px;" width="9.5" height="9.5" viewBox="0 0 9.5 9.5"><circle cx="4.750" cy="4.750" r="4.750" fill="#c4c4c4"/><path d="M3.300 3.800a1.500 1.500 0 1 1 2.200 1.300c-.6.300-.7.600-.7 1.200" fill="none" stroke="#3e3e3e" stroke-width="1.100"/><circle cx="4.750" cy="7.600" r=".7" fill="#3e3e3e"/></svg>
<svg style="left:1303.5px;top:359.3px;" width="10" height="10" viewBox="0 0 10 10"><path d="M0 2.600H10M0 7.400H10" stroke="#c4c4c4" stroke-width="1.100"/><path d="M6.300 .6V4.600M3.300 5.400V9.400" stroke="#c4c4c4" stroke-width="1.500"/></svg>
<svg style="left:1325.5px;top:359.5px;" width="3" height="9" viewBox="0 0 3 9"><rect x=".4" y=".1" width="2.2" height="2.1" rx=".5" fill="#c4c4c4"/><rect x=".4" y="3.4" width="2.2" height="2.1" rx=".5" fill="#c4c4c4"/><rect x=".4" y="6.7" width="2.2" height="2.1" rx=".5" fill="#c4c4c4"/></svg>
<span class="t" style="left:992px;top:377.3px;color:#7d7d7d">Script</span>
<div class="fld" style="left:1126.6px;top:377.0px;width:208.4px"><span class="t" style="left:13.5px;top:-.7px;color:#7d7d7d">CharacterBody</span></div><svg style="left:1130.1px;top:379.3px;" width="8.5" height="10.5" viewBox="0 0 8.5 10.5"><g opacity=".55"><path d="M0 0H6L8.500 2.500V10.500H0Z" fill="#e8e8e8"/><path d="M3 3.500 2.500 8M5.600 3.500 5.100 8M1.600 4.800H6.800M1.400 6.700H6.600" stroke="#3f8a3f" stroke-width=".9"/></g></svg><div style="left:1318px;top:378.0px;width:16px;height:13px;background:#333"></div><svg style="left:1321.5px;top:380.0px;" width="9" height="9" viewBox="0 0 9 9"><circle cx="4.500" cy="4.500" r="3.800" fill="none" stroke="#6e6e6e" stroke-width="1"/><circle cx="4.500" cy="4.500" r="1.400" fill="#6e6e6e"/></svg>
<span class="t" style="left:992px;top:395.1px">Rigidbody</span>
<div class="fld" style="left:1126.6px;top:394.8px;width:208.4px"><span class="t" style="left:13.5px;top:-.7px">Captain (Rigidbody 2D)</span></div><svg style="left:1129.6px;top:396.8px;" width="10" height="11" viewBox="0 0 10 11"><circle cx="5" cy="5" r="3.800" fill="#7fc241"/><path d="M1 9.500H9" stroke="#c4c4c4" stroke-width="1"/></svg><div style="left:1318px;top:395.8px;width:16px;height:13px;background:#333"></div><svg style="left:1321.5px;top:397.8px;" width="9" height="9" viewBox="0 0 9 9"><circle cx="4.500" cy="4.500" r="3.800" fill="none" stroke="#c4c4c4" stroke-width="1"/><circle cx="4.500" cy="4.500" r="1.400" fill="#c4c4c4"/></svg>
<span class="t" style="left:992px;top:412.9px">Gravity Factor</span>
<div class="fld" style="left:1126.6px;top:412.6px;width:208.4px"><span class="t" style="left:2.7px;top:-.7px">3</span></div>
<span class="t" style="left:992px;top:430.8px">Solid Layers</span>
<div class="dd" style="left:1126.6px;top:430.7px;width:208.4px;height:14.600px"><span class="t" style="left:3px;top:-.9px;color:#d2d2d2">Default</span><svg style="left:194.9000000000001px;top:4.5px" width="7.5" height="4.2" viewBox="0 0 7.5 4.2"><path d="M0 0H7.5L3.75 4.2Z" fill="#d6d6d6"/></svg></div>
<span class="t" style="left:992px;top:449.1px">Max Speed</span>
<div class="fld" style="left:1126.6px;top:448.8px;width:208.4px"><span class="t" style="left:2.7px;top:-.7px">30</span></div>
<span class="t" style="left:992px;top:467.0px">Surface Anchor</span>
<div class="fld" style="left:1126.6px;top:466.7px;width:208.4px"><span class="t" style="left:2.7px;top:-.7px">0.01</span></div>
<span class="t" style="left:992px;top:484.8px">Max Slop</span>
<div style="left:1126.500px;top:491.500px;width:159px;height:1.400px;background:#5e5e5e"></div>
<div style="left:1202.500px;top:488px;width:8.400px;height:8.400px;border-radius:50%;background:#999"></div>
<div class="fld" style="left:1291px;top:485.0px;width:44.0px"><span class="t" style="left:2.7px;top:-.7px">45</span></div>
<span class="t" style="left:992px;top:504.2px">Velocity</span>
<span class="t" style="left:1127.5px;top:504.2px">X</span>
<div class="fld" style="left:1139.5px;top:503.9px;width:54.1px"><span class="t" style="left:2.7px;top:-.7px">0</span></div>
<div class="fld" style="left:1211px;top:503.9px;width:52.3px"><span class="t" style="left:2.7px;top:-.7px">0</span></div>
<span class="t" style="left:992px;top:522.3px">State</span>
<div class="dd" style="left:1126.6px;top:522.2px;width:208.4px;height:14.600px"><span class="t" style="left:3px;top:-.9px;color:#d2d2d2">Grounded</span><svg style="left:194.9000000000001px;top:4.5px" width="7.5" height="4.2" viewBox="0 0 7.5 4.2"><path d="M0 0H7.5L3.75 4.2Z" fill="#d6d6d6"/></svg></div>
<div class="sep" style="left:975px;top:545px;width:364px;background:#1f1f1f"></div>
<div style="left:975px;top:546px;width:364px;height:18px;background:#3e3e3e"></div>
<div class="sep" style="left:975px;top:564px;width:364px;background:#303030"></div>
<svg style="left:980.7px;top:552.3px" width="7.4" height="6" viewBox="0 0 7.4 6"><path d="M0 0H7.4L3.7 6Z" fill="#6e6e6e"/></svg>
<svg style="left:994.5px;top:548.8px;" width="10.5" height="12.5" viewBox="0 0 10.5 12.5"><path d="M0 1a1 1 0 0 1 1-1H7L10.500 3.500V11.500a1 1 0 0 1-1 1H1a1 1 0 0 1-1-1Z" fill="#ececec"/><path d="M4 3.800 3.400 9.400M7 3.800 6.400 9.400M1.800 5.500H8.600M1.600 7.800H8.400" stroke="#2f8a3a" stroke-width="1.100"/></svg>
<div style="left:1010.300px;top:548.8px;width:12.400px;height:12.400px;background:#2a2a2a;border:1px solid #1e1e1e;border-radius:2px"></div>
<svg style="left:1012.3px;top:551.6px;" width="8.5" height="7" viewBox="0 0 8.5 7"><path d="M.8 3.600 3.200 6 7.700 1" fill="none" stroke="#ececec" stroke-width="1.400"/></svg>
<span class="t b" id="hd2" style="left:1028px;top:547.7px;color:#dcdcdc;font-size:12.1px">Character Controller (Script)</span>
<svg style="left:1287px;top:550.3px;" width="9.5" height="9.5" viewBox="0 0 9.5 9.5"><circle cx="4.750" cy="4.750" r="4.750" fill="#c4c4c4"/><path d="M3.300 3.800a1.500 1.500 0 1 1 2.200 1.300c-.6.300-.7.600-.7 1.200" fill="none" stroke="#3e3e3e" stroke-width="1.100"/><circle cx="4.750" cy="7.600" r=".7" fill="#3e3e3e"/></svg>
<svg style="left:1303.5px;top:550.3px;" width="10" height="10" viewBox="0 0 10 10"><path d="M0 2.600H10M0 7.400H10" stroke="#c4c4c4" stroke-width="1.100"/><path d="M6.300 .6V4.600M3.300 5.400V9.400" stroke="#c4c4c4" stroke-width="1.500"/></svg>
<svg style="left:1325.5px;top:550.5px;" width="3" height="9" viewBox="0 0 3 9"><rect x=".4" y=".1" width="2.2" height="2.1" rx=".5" fill="#c4c4c4"/><rect x=".4" y="3.4" width="2.2" height="2.1" rx=".5" fill="#c4c4c4"/><rect x=".4" y="6.7" width="2.2" height="2.1" rx=".5" fill="#c4c4c4"/></svg>
<span class="t" style="left:992px;top:568.7px;color:#7d7d7d">Script</span>
<div class="fld" style="left:1126.6px;top:568.4px;width:208.4px"><span class="t" style="left:13.5px;top:-.7px;color:#7d7d7d">CharacterController</span></div><svg style="left:1130.1px;top:570.6999999999999px;" width="8.5" height="10.5" viewBox="0 0 8.5 10.5"><g opacity=".55"><path d="M0 0H6L8.500 2.500V10.500H0Z" fill="#e8e8e8"/><path d="M3 3.500 2.500 8M5.600 3.500 5.100 8M1.600 4.800H6.800M1.400 6.700H6.600" stroke="#3f8a3f" stroke-width=".9"/></g></svg><div style="left:1318px;top:569.4px;width:16px;height:13px;background:#333"></div><svg style="left:1321.5px;top:571.4px;" width="9" height="9" viewBox="0 0 9 9"><circle cx="4.500" cy="4.500" r="3.800" fill="none" stroke="#6e6e6e" stroke-width="1"/><circle cx="4.500" cy="4.500" r="1.400" fill="#6e6e6e"/></svg>
<span class="t" style="left:992px;top:586.4px">Character Body</span>
<div class="fld" style="left:1126.6px;top:586.1px;width:208.4px"><span class="t" style="left:13.5px;top:-.7px">Captain (Character Body)</span></div><svg style="left:1130.1px;top:588.4px;" width="8.5" height="10.5" viewBox="0 0 8.5 10.5"><g><path d="M0 0H6L8.500 2.500V10.500H0Z" fill="#e8e8e8"/><path d="M3 3.500 2.500 8M5.600 3.500 5.100 8M1.600 4.800H6.800M1.400 6.700H6.600" stroke="#3f8a3f" stroke-width=".9"/></g></svg><div style="left:1318px;top:587.1px;width:16px;height:13px;background:#333"></div><svg style="left:1321.5px;top:589.1px;" width="9" height="9" viewBox="0 0 9 9"><circle cx="4.500" cy="4.500" r="3.800" fill="none" stroke="#c4c4c4" stroke-width="1"/><circle cx="4.500" cy="4.500" r="1.400" fill="#c4c4c4"/></svg>
<span class="t" style="left:992px;top:604.0px">Speed</span>
<div class="fld" style="left:1126.6px;top:603.7px;width:208.4px"><span class="t" style="left:2.7px;top:-.7px">5</span></div>
<span class="t" style="left:992px;top:621.8px">Jump Height</span>
<div class="fld" style="left:1126.6px;top:621.5px;width:208.4px"><span class="t" style="left:2.7px;top:-.7px">2.5</span></div>
<span class="t" style="left:992px;top:639.5px">Stop Jump Factor</span>
<div class="fld" style="left:1126.6px;top:639.2px;width:208.4px"><span class="t" style="left:2.7px;top:-.7px">2.5</span></div>
<div class="sep" style="left:975px;top:661px;width:364px;background:#1f1f1f"></div>
<div style="left:975px;top:662px;width:364px;height:18px;background:#3e3e3e"></div>
<div class="sep" style="left:975px;top:680px;width:364px;background:#303030"></div>
<svg style="left:980.7px;top:668.3px" width="7.4" height="6" viewBox="0 0 7.4 6"><path d="M0 0H7.4L3.7 6Z" fill="#6e6e6e"/></svg>
<svg style="left:993.5px;top:665px;" width="12" height="12" viewBox="0 0 12 12"><circle cx="6" cy="6" r="6" fill="#f0f0f0"/><path d="M7 1.800 3.600 6.600H5.800L5 10.300 8.600 5.400H6.400Z" fill="#1b93d8"/></svg>
<div style="left:1010.300px;top:664.8px;width:12.400px;height:12.400px;background:#2a2a2a;border:1px solid #1e1e1e;border-radius:2px"></div>
<svg style="left:1012.3px;top:667.6px;" width="8.5" height="7" viewBox="0 0 8.5 7"><path d="M.8 3.600 3.200 6 7.700 1" fill="none" stroke="#ececec" stroke-width="1.400"/></svg>
<span class="t b" id="hd3" style="left:1028px;top:663.7px;color:#dcdcdc;font-size:12.1px">Player Input</span>
<svg style="left:1287px;top:666.3px;" width="9.5" height="9.5" viewBox="0 0 9.5 9.5"><circle cx="4.750" cy="4.750" r="4.750" fill="#c4c4c4"/><path d="M3.300 3.800a1.500 1.500 0 1 1 2.200 1.300c-.6.300-.7.600-.7 1.200" fill="none" stroke="#3e3e3e" stroke-width="1.100"/><circle cx="4.750" cy="7.600" r=".7" fill="#3e3e3e"/></svg>
<svg style="left:1303.5px;top:666.3px;" width="10" height="10" viewBox="0 0 10 10"><path d="M0 2.600H10M0 7.400H10" stroke="#c4c4c4" stroke-width="1.100"/><path d="M6.300 .6V4.600M3.300 5.400V9.400" stroke="#c4c4c4" stroke-width="1.500"/></svg>
<svg style="left:1325.5px;top:666.5px;" width="3" height="9" viewBox="0 0 3 9"><rect x=".4" y=".1" width="2.2" height="2.1" rx=".5" fill="#c4c4c4"/><rect x=".4" y="3.4" width="2.2" height="2.1" rx=".5" fill="#c4c4c4"/><rect x=".4" y="6.7" width="2.2" height="2.1" rx=".5" fill="#c4c4c4"/></svg>
<span class="t" style="left:992px;top:685.6px">Actions</span>
<div class="fld" style="left:1121.3px;top:685.3px;width:213.7px"><span class="t" style="left:12.5px;top:-.7px">Controls (Input Action Asset)</span></div><svg style="left:1123.8px;top:687.8px;" width="10" height="10" viewBox="0 0 10 10"><path d="M1.500 7V4.500a3.200 3.200 0 0 1 6.400 0V7" fill="none" stroke="#6fb4e8" stroke-width="1.100"/><rect x=".6" y="5.200" width="2" height="3.200" fill="#6fb4e8"/><path d="M7.800 4.200 6.200 7H7.600L6.800 9.800 9.400 6.400H8Z" fill="#e0552d"/></svg><div style="left:1318px;top:686.3px;width:16px;height:13px;background:#333"></div><svg style="left:1321.5px;top:688.3px;" width="9" height="9" viewBox="0 0 9 9"><circle cx="4.500" cy="4.500" r="3.800" fill="none" stroke="#c4c4c4" stroke-width="1"/><circle cx="4.500" cy="4.500" r="1.400" fill="#c4c4c4"/></svg>
<span class="t" style="left:1005.3px;top:703.2px">Default Map</span>
<div class="dd" style="left:1121.3px;top:703.1px;width:213.7px;height:14.600px"><span class="t" style="left:3px;top:-.9px;color:#d2d2d2">Character</span><svg style="left:200.20000000000005px;top:4.5px" width="7.5" height="4.2" viewBox="0 0 7.5 4.2"><path d="M0 0H7.5L3.75 4.2Z" fill="#d6d6d6"/></svg></div>
<span class="t" style="left:992px;top:721.0px">UI Input Module</span>
<div class="fld" style="left:1121.3px;top:720.7px;width:213.7px"><span class="t" style="left:2px;top:-.7px">None (Input System UI Input Module)</span></div><div style="left:1318px;top:721.7px;width:16px;height:13px;background:#333"></div><svg style="left:1321.5px;top:723.7px;" width="9" height="9" viewBox="0 0 9 9"><circle cx="4.500" cy="4.500" r="3.800" fill="none" stroke="#c4c4c4" stroke-width="1"/><circle cx="4.500" cy="4.500" r="1.400" fill="#c4c4c4"/></svg>
<span class="t" style="left:992px;top:738.8px">Camera</span>
<div class="fld" style="left:1121.3px;top:738.5px;width:213.7px"><span class="t" style="left:2px;top:-.7px">None (Camera)</span></div><div style="left:1318px;top:739.5px;width:16px;height:13px;background:#333"></div><svg style="left:1321.5px;top:741.5px;" width="9" height="9" viewBox="0 0 9 9"><circle cx="4.500" cy="4.500" r="3.800" fill="none" stroke="#c4c4c4" stroke-width="1"/><circle cx="4.500" cy="4.500" r="1.400" fill="#c4c4c4"/></svg>
<span class="t" style="left:992px;top:756.4px">Behavior</span>
<div class="dd" style="left:1121.3px;top:756.3px;width:213.7px;height:14.600px"><span class="t" style="left:3px;top:-.9px;color:#d2d2d2">Invoke Unity Events</span><svg style="left:200.20000000000005px;top:4.5px" width="7.5" height="4.2" viewBox="0 0 7.5 4.2"><path d="M0 0H7.5L3.75 4.2Z" fill="#d6d6d6"/></svg></div>
<svg style="left:981.7px;top:777.6px" width="6" height="8" viewBox="0 0 6 8"><path d="M0 0V8L6 4.0Z" fill="#6e6e6e"/></svg>
<span class="t" style="left:992px;top:774.4px">Events</span>
<div class="btn" style="left:991.500px;top:792.200px;width:165.700px;height:14.400px;line-height:12.400px;color:#dedede"><span class="t" style="left:0;right:0;top:-.8px;text-align:center" id="b1">Open Input Settings</span></div>
<div class="btn" style="left:1161px;top:792.200px;width:174px;height:14.400px;line-height:12.400px;color:#dedede"><span class="t" style="left:0;right:0;top:-.8px;text-align:center">Open Input Debugger</span></div>
<div class="sep" style="left:975px;top:815px;width:364px;background:#1f1f1f"></div>
<div class="btn" style="left:1056px;top:824.600px;width:203px;height:19.200px;color:#dedede"><span class="t" style="left:0;right:0;top:1.600px;text-align:center" id="b3">Add Component</span></div>
<div class="sep" style="left:975px;top:854px;width:376px;background:#1f1f1f"></div>
<div style="left:975px;top:855px;width:376px;height:22px;background:#3c3c3c"></div>
<span class="t b" style="left:978px;top:858.800px;color:#d2d2d2" id="al">Asset Labels</span>
<div class="sep" style="left:975px;top:877px;width:376px;background:#262626"></div>
<div style="left:975px;top:878px;width:376px;height:6px;background:#3c3c3c"></div>
<!--status-->
<div style="left:49px;top:884px;width:1302px;height:20px;background:#191919"></div>
<div style="left:1280px;top:885px;width:1px;height:18px;background:#262626"></div><div style="left:1303.500px;top:885px;width:1px;height:18px;background:#262626"></div><div style="left:1326.500px;top:885px;width:1px;height:18px;background:#262626"></div>
<svg style="left:1284.5px;top:888px;" width="13" height="12" viewBox="0 0 13 12"><ellipse cx="5.500" cy="6.500" rx="3" ry="4.400" fill="#ffc107"/><circle cx="5.500" cy="2.300" r="1.700" fill="#ffc107"/><path d="M.4 3 3 5.200M0 7H3M.6 11 3 8.600M10 2.400 8 5M9 7H8M9.600 11 8 8.600" stroke="#ffc107" stroke-width="1.200"/><path d="M11.500 3V8.200" stroke="#ffc107" stroke-width="1.700"/><circle cx="11.500" cy="10.600" r="1" fill="#ffc107"/></svg>
<svg style="left:1308.5px;top:888px;" width="13" height="12" viewBox="0 0 13 12"><ellipse cx="6" cy="2.600" rx="5" ry="2.400" fill="#d2d2d2"/><path d="M1 4.800c0 3 10 3 10 0v2c0 3-10 3-10 0ZM1 8.200c0 3 10 3 10 0v1.400c0 3.200-10 3.200-10 0Z" fill="#d2d2d2"/><path d="M1.500 .5 12.500 11.500" stroke="#191919" stroke-width="2.200"/><path d="M1 0 12.500 11.500" stroke="#d2d2d2" stroke-width="1"/></svg>
<svg style="left:1331.5px;top:887.5px;" width="13" height="13" viewBox="0 0 13 13"><circle cx="6.500" cy="6.500" r="5.700" fill="none" stroke="#c4c4c4" stroke-width="1.100"/><path d="M4 6.600 6 8.500 9.300 4.800" fill="none" stroke="#c4c4c4" stroke-width="1.500"/></svg>
<!--arrows-->
<svg style="left:0;top:0" width="1400" height="969" viewBox="0 0 1400 969"><defs><filter id="ash" x="-5%" y="-5%" width="110%" height="110%"><feGaussianBlur stdDeviation="1.600"/></filter></defs><g fill="#000" opacity=".45" transform="translate(0 2.200)" filter="url(#ash)"><polygon points="542.4,454.4 541.0,454.5 539.2,454.8 537.1,455.0 534.8,455.3 532.2,455.6 529.5,455.9 526.7,456.2 524.0,456.6 521.2,456.9 518.6,457.2 516.1,457.5 513.8,457.8 511.7,458.0 509.6,458.2 507.7,458.5 505.7,458.7 503.8,458.9 502.0,459.1 500.2,459.3 498.3,459.5 496.5,459.7 494.7,459.9 492.9,460.0 491.0,460.2 489.1,460.4 487.2,460.5 485.4,460.7 483.5,460.8 481.6,460.9 479.7,461.0 477.8,461.1 476.0,461.2 474.1,461.3 472.2,461.4 470.3,461.5 468.5,461.5 466.6,461.6 464.7,461.6 462.8,461.7 460.9,461.7 459.0,461.7 457.2,461.7 455.3,461.7 453.4,461.6 451.5,461.6 449.6,461.6 447.7,461.5 445.8,461.5 443.9,461.4 442.0,461.4 440.2,461.3 438.3,461.2 436.4,461.2 434.5,461.1 432.6,461.0 430.8,460.9 428.9,460.8 427.0,460.6 425.1,460.5 423.2,460.4 421.4,460.2 419.5,460.1 417.6,459.9 415.7,459.7 413.8,459.6 411.9,459.4 410.0,459.2 408.1,459.0 406.2,458.8 404.4,458.5 402.5,458.3 400.6,458.1 398.7,457.8 396.8,457.6 394.9,457.3 393.0,457.1 391.1,456.8 389.2,456.5 387.3,456.2 385.5,455.9 383.6,455.6 381.7,455.3 379.8,455.0 377.9,454.6 376.0,454.3 374.2,453.9 372.3,453.5 370.4,453.2 368.5,452.8 366.7,452.4 364.8,452.0 362.9,451.5 361.1,451.1 359.2,450.7 357.4,450.2 355.5,449.7 353.6,449.2 351.8,448.6 349.9,448.1 348.0,447.5 346.1,446.9 344.3,446.3 342.4,445.7 340.5,445.0 338.7,444.4 336.8,443.7 334.9,443.0 333.1,442.3 331.2,441.6 329.3,440.8 327.5,440.0 325.6,439.2 323.8,438.4 321.9,437.6 320.0,436.7 318.2,435.9 316.3,435.0 314.5,434.1 312.6,433.1 310.7,432.2 308.9,431.2 307.0,430.2 305.1,429.2 303.3,428.1 301.4,427.0 299.5,425.9 297.6,424.8 295.7,423.7 293.9,422.5 292.0,421.4 290.1,420.2 288.2,419.0 286.3,417.8 284.4,416.6 282.4,415.4 280.5,414.2 278.6,412.9 276.7,411.7 274.8,410.4 272.9,409.1 271.1,407.9 269.3,406.6 267.5,405.3 265.8,404.0 264.0,402.6 262.3,401.3 260.7,399.9 259.0,398.5 257.3,397.1 255.7,395.7 254.1,394.2 252.5,392.8 250.9,391.3 249.3,389.9 247.8,388.4 246.3,387.0 244.8,385.5 243.3,384.1 241.9,382.7 240.5,381.2 239.1,379.8 237.7,378.3 236.3,376.9 234.9,375.4 233.6,373.9 232.2,372.5 230.9,371.0 229.5,369.5 228.2,368.1 226.9,366.6 225.6,365.2 224.3,363.8 223.0,362.3 221.7,360.9 220.4,359.4 219.2,358.0 217.9,356.5 216.7,355.1 215.4,353.6 214.2,352.2 213.0,350.7 211.7,349.2 210.5,347.8 209.3,346.3 208.1,344.9 206.9,343.4 205.7,342.0 204.5,340.5 203.4,339.0 202.2,337.6 201.1,336.2 200.0,334.7 198.8,333.3 197.7,331.8 196.6,330.4 195.6,328.9 194.5,327.5 193.4,326.0 192.4,324.6 191.3,323.2 190.3,321.8 189.3,320.3 188.3,318.9 187.4,317.5 186.4,316.0 185.5,314.6 184.5,313.2 183.6,311.7 182.7,310.3 181.8,308.9 181.0,307.4 180.1,306.0 179.2,304.5 178.4,303.1 177.5,301.6 176.7,300.2 175.9,298.8 175.1,297.3 174.3,295.9 173.5,294.5 172.7,293.0 171.9,291.6 171.2,290.2 170.4,288.7 169.7,287.3 168.9,285.9 168.2,284.4 167.5,283.0 166.7,281.5 166.0,280.0 165.2,278.4 164.5,276.8 163.7,275.3 163.0,273.7 162.3,272.1 161.6,270.6 160.9,269.2 160.3,267.9 159.7,266.6 159.1,265.5 158.7,264.5 158.2,263.5 157.8,262.7 157.4,261.9 157.1,261.2 156.7,260.5 156.4,260.0 156.2,259.5 156.0,259.0 155.7,258.6 155.6,258.2 155.4,257.9 147.0,262.1 147.2,262.4 147.4,262.8 147.6,263.2 147.8,263.7 148.0,264.2 148.3,264.8 148.6,265.4 149.0,266.1 149.3,266.8 149.7,267.6 150.2,268.5 150.7,269.5 151.2,270.6 151.7,271.8 152.3,273.2 153.0,274.6 153.7,276.1 154.4,277.7 155.1,279.3 155.9,280.9 156.7,282.5 157.4,284.1 158.2,285.7 158.9,287.2 159.7,288.7 160.4,290.2 161.2,291.7 161.9,293.1 162.7,294.6 163.4,296.1 164.2,297.6 165.0,299.1 165.8,300.5 166.6,302.0 167.5,303.5 168.3,305.0 169.1,306.5 170.0,308.0 170.9,309.5 171.7,311.0 172.6,312.4 173.5,313.9 174.4,315.4 175.4,316.9 176.3,318.4 177.3,319.9 178.2,321.4 179.2,322.9 180.2,324.4 181.3,325.9 182.3,327.4 183.4,328.9 184.4,330.4 185.5,331.9 186.6,333.3 187.7,334.8 188.8,336.3 190.0,337.7 191.1,339.2 192.2,340.7 193.4,342.2 194.6,343.7 195.8,345.1 196.9,346.6 198.2,348.1 199.4,349.6 200.6,351.1 201.8,352.5 203.1,354.0 204.3,355.5 205.6,357.0 206.8,358.4 208.1,359.9 209.3,361.4 210.6,362.8 211.9,364.3 213.2,365.8 214.5,367.2 215.8,368.7 217.1,370.2 218.4,371.6 219.8,373.1 221.1,374.6 222.5,376.1 223.8,377.5 225.2,379.0 226.6,380.5 228.0,381.9 229.4,383.4 230.8,384.9 232.2,386.4 233.7,387.9 235.1,389.4 236.7,390.9 238.2,392.4 239.7,393.8 241.3,395.3 242.9,396.8 244.5,398.3 246.1,399.8 247.8,401.2 249.5,402.7 251.2,404.2 252.9,405.7 254.7,407.1 256.4,408.6 258.2,410.0 260.0,411.4 261.9,412.8 263.8,414.2 265.7,415.6 267.6,416.9 269.6,418.2 271.5,419.5 273.5,420.8 275.4,422.1 277.4,423.3 279.4,424.6 281.3,425.8 283.2,427.0 285.1,428.2 287.1,429.4 289.0,430.5 290.9,431.7 292.8,432.9 294.8,434.0 296.7,435.1 298.7,436.2 300.6,437.3 302.6,438.4 304.5,439.4 306.5,440.4 308.4,441.4 310.3,442.4 312.3,443.3 314.2,444.3 316.2,445.2 318.1,446.0 320.0,446.9 322.0,447.7 323.9,448.6 325.8,449.4 327.8,450.1 329.7,450.9 331.7,451.7 333.6,452.4 335.6,453.1 337.5,453.8 339.5,454.4 341.4,455.1 343.4,455.7 345.3,456.3 347.3,456.9 349.2,457.4 351.2,458.0 353.1,458.5 355.0,459.0 357.0,459.5 358.9,460.0 360.9,460.5 362.8,460.9 364.7,461.3 366.7,461.7 368.6,462.1 370.5,462.5 372.4,462.9 374.4,463.2 376.3,463.6 378.2,463.9 380.1,464.3 382.1,464.6 384.0,464.9 385.9,465.2 387.9,465.5 389.8,465.8 391.7,466.1 393.7,466.4 395.6,466.6 397.5,466.9 399.4,467.1 401.4,467.4 403.3,467.6 405.2,467.8 407.1,468.0 409.1,468.2 411.0,468.4 412.9,468.6 414.9,468.8 416.8,469.0 418.7,469.1 420.6,469.3 422.6,469.4 424.5,469.6 426.4,469.7 428.3,469.8 430.2,469.9 432.2,470.0 434.1,470.1 436.0,470.2 437.9,470.3 439.8,470.3 441.8,470.4 443.7,470.5 445.6,470.5 447.5,470.5 449.4,470.6 451.4,470.6 453.3,470.6 455.2,470.6 457.1,470.6 459.1,470.6 461.0,470.6 462.9,470.6 464.9,470.6 466.8,470.5 468.7,470.5 470.7,470.4 472.6,470.3 474.5,470.2 476.4,470.1 478.4,470.0 480.3,469.9 482.2,469.8 484.1,469.6 486.0,469.5 487.9,469.3 489.9,469.2 491.8,469.0 493.7,468.8 495.6,468.6 497.4,468.4 499.3,468.3 501.1,468.0 503.0,467.8 504.9,467.6 506.7,467.4 508.7,467.2 510.7,466.9 512.7,466.7 514.8,466.4 517.1,466.2 519.6,465.9 522.2,465.6 525.0,465.2 527.8,464.9 530.5,464.6 533.2,464.2 535.8,463.9 538.1,463.7 540.2,463.4 542.0,463.2 543.4,463.0"/><polygon points="135.2,221.7 130.3,270.2 171.6,253.4"/><polygon points="1070.2,380.2 1071.4,380.5 1073.1,380.8 1074.9,381.3 1077.0,381.7 1079.2,382.2 1081.6,382.8 1084.1,383.4 1086.5,384.0 1089.0,384.6 1091.4,385.3 1093.6,386.0 1095.7,386.7 1097.8,387.4 1099.8,388.2 1101.8,388.9 1103.8,389.7 1105.8,390.5 1107.7,391.3 1109.7,392.2 1111.7,393.1 1113.6,394.0 1115.6,394.9 1117.6,395.9 1119.5,396.9 1121.6,398.0 1123.6,399.1 1125.7,400.2 1127.8,401.4 1129.8,402.6 1131.9,403.8 1133.9,405.0 1135.9,406.3 1137.9,407.5 1139.8,408.8 1141.6,410.1 1143.3,411.4 1145.0,412.8 1146.6,414.1 1148.2,415.5 1149.7,416.9 1151.2,418.4 1152.6,419.8 1154.0,421.3 1155.4,422.9 1156.8,424.4 1158.1,426.1 1159.5,427.7 1160.8,429.4 1162.1,431.1 1163.4,432.9 1164.7,434.7 1166.0,436.6 1167.3,438.5 1168.5,440.5 1169.8,442.5 1171.0,444.4 1172.2,446.4 1173.3,448.4 1174.5,450.3 1175.6,452.2 1176.6,454.1 1177.6,455.9 1178.6,457.7 1179.5,459.5 1180.4,461.2 1181.3,463.0 1182.1,464.8 1182.9,466.5 1183.7,468.3 1184.5,470.1 1185.2,471.9 1186.0,473.8 1186.7,475.7 1187.4,477.6 1188.1,479.6 1188.7,481.6 1189.4,483.6 1190.0,485.6 1190.6,487.6 1191.2,489.6 1191.8,491.7 1192.4,493.7 1192.9,495.6 1193.5,497.6 1194.0,499.5 1194.4,501.5 1194.9,503.4 1195.3,505.4 1195.7,507.3 1196.1,509.3 1196.4,511.2 1196.7,513.2 1197.0,515.2 1197.2,517.2 1197.4,519.2 1197.6,521.2 1197.7,523.3 1197.8,525.4 1197.8,527.8 1197.9,530.1 1197.9,532.5 1197.9,534.9 1197.9,537.2 1197.9,539.3 1197.9,541.3 1197.8,543.1 1197.8,544.7 1197.8,545.9 1207.8,546.1 1207.8,544.9 1207.9,543.4 1208.0,541.6 1208.1,539.6 1208.2,537.4 1208.3,535.1 1208.4,532.7 1208.5,530.2 1208.5,527.7 1208.5,525.3 1208.5,522.9 1208.4,520.6 1208.3,518.4 1208.2,516.3 1208.0,514.2 1207.9,512.1 1207.8,509.9 1207.6,507.8 1207.4,505.6 1207.2,503.5 1206.9,501.3 1206.6,499.2 1206.3,497.0 1205.9,494.8 1205.5,492.6 1205.0,490.4 1204.5,488.2 1203.9,486.0 1203.3,483.9 1202.6,481.7 1201.9,479.5 1201.2,477.4 1200.4,475.2 1199.7,473.1 1198.9,471.1 1198.0,469.0 1197.2,467.0 1196.3,465.0 1195.5,463.1 1194.6,461.1 1193.6,459.2 1192.7,457.3 1191.7,455.5 1190.7,453.6 1189.7,451.7 1188.6,449.8 1187.5,447.9 1186.4,446.0 1185.3,444.0 1184.1,442.0 1182.9,440.0 1181.6,437.9 1180.3,435.8 1179.0,433.7 1177.6,431.7 1176.2,429.6 1174.7,427.6 1173.2,425.6 1171.7,423.7 1170.2,421.8 1168.6,420.0 1167.1,418.3 1165.6,416.6 1164.0,414.9 1162.4,413.3 1160.8,411.7 1159.1,410.1 1157.4,408.5 1155.6,407.0 1153.8,405.5 1152.0,404.0 1150.1,402.6 1148.1,401.1 1146.0,399.7 1143.9,398.3 1141.8,396.9 1139.6,395.6 1137.4,394.3 1135.2,393.1 1133.0,391.9 1130.8,390.7 1128.6,389.6 1126.4,388.5 1124.3,387.5 1122.1,386.5 1120.0,385.5 1117.8,384.6 1115.7,383.7 1113.5,382.9 1111.4,382.1 1109.3,381.3 1107.1,380.6 1105.0,379.9 1102.8,379.2 1100.7,378.5 1098.5,377.9 1096.2,377.3 1093.7,376.6 1091.2,376.0 1088.6,375.5 1086.0,374.9 1083.5,374.4 1081.1,373.9 1078.8,373.4 1076.7,373.0 1074.8,372.6 1073.3,372.3 1072.0,372.0"/><polygon points="1195.7,586.5 1180.8,542.0 1224.6,548.2"/><polygon points="459.9,678.3 461.8,679.6 464.1,681.2 466.9,683.1 469.9,685.2 473.2,687.5 476.8,689.9 480.5,692.5 484.3,695.1 488.1,697.8 492.0,700.4 495.8,703.0 499.5,705.5 503.1,707.9 506.8,710.4 510.6,712.9 514.5,715.4 518.4,718.0 522.3,720.6 526.3,723.2 530.2,725.7 534.2,728.3 538.2,730.9 542.1,733.4 546.0,735.8 549.9,738.3 553.9,740.7 557.8,743.2 561.8,745.6 565.8,748.0 569.7,750.4 573.7,752.8 577.5,755.1 581.4,757.4 585.1,759.6 588.8,761.8 592.4,764.0 595.9,766.1 599.3,768.1 602.5,770.1 605.7,772.0 608.9,774.0 612.0,775.8 615.2,777.7 618.3,779.6 621.4,781.4 624.6,783.2 627.9,785.1 631.2,786.9 634.5,788.7 637.6,790.5 640.6,792.2 643.6,793.8 646.6,795.5 649.8,797.1 653.0,798.8 656.4,800.6 660.1,802.4 664.0,804.4 668.3,806.4 673.0,808.6 678.1,811.0 683.6,813.7 689.6,816.5 695.9,819.4 702.4,822.4 709.0,825.5 715.8,828.5 722.5,831.5 729.2,834.4 735.8,837.1 742.2,839.6 748.2,841.9 754.1,843.9 759.7,845.7 765.3,847.4 770.8,849.0 776.2,850.4 781.5,851.8 786.8,853.1 792.1,854.3 797.4,855.4 802.6,856.5 807.9,857.6 813.2,858.7 818.6,859.9 824.1,860.9 829.6,862.0 835.1,863.0 840.7,864.0 846.2,864.9 851.7,865.8 857.1,866.6 862.5,867.3 867.9,867.9 873.1,868.4 878.3,868.8 883.3,869.1 888.2,869.2 893.0,869.3 897.8,869.3 902.4,869.1 907.0,868.9 911.6,868.7 916.1,868.3 920.6,867.9 925.1,867.5 929.7,867.0 934.2,866.5 938.8,865.9 943.4,865.3 948.1,864.6 952.8,863.8 957.4,863.0 962.1,862.1 966.7,861.2 971.2,860.2 975.7,859.2 980.0,858.2 984.3,857.1 988.4,856.0 992.5,854.8 996.4,853.6 1000.1,852.4 1003.8,851.1 1007.5,849.8 1011.0,848.5 1014.5,847.1 1018.1,845.6 1021.6,844.1 1025.1,842.5 1028.6,840.8 1032.2,839.1 1035.9,837.2 1039.6,835.2 1043.4,833.1 1047.2,831.0 1051.0,828.8 1054.7,826.5 1058.4,824.2 1062.0,821.9 1065.6,819.6 1069.1,817.3 1072.4,815.1 1075.6,813.0 1078.8,810.8 1081.8,808.6 1084.8,806.5 1087.7,804.3 1090.5,802.1 1093.3,800.0 1095.9,797.9 1098.5,795.8 1101.0,793.8 1103.4,791.8 1105.7,789.8 1108.0,788.0 1110.2,786.2 1112.2,784.5 1114.2,782.8 1116.0,781.2 1117.8,779.7 1119.5,778.1 1121.2,776.6 1122.9,775.0 1124.6,773.4 1126.2,771.8 1128.0,770.0 1129.7,768.2 1131.6,766.2 1133.6,764.0 1135.7,761.7 1137.7,759.3 1139.8,756.9 1141.8,754.5 1143.8,752.2 1145.6,750.0 1147.3,748.0 1148.7,746.2 1150.0,744.7 1151.0,743.5 1144.0,737.5 1143.0,738.7 1141.7,740.3 1140.2,742.1 1138.5,744.1 1136.7,746.3 1134.8,748.6 1132.8,750.9 1130.7,753.3 1128.7,755.6 1126.7,757.8 1124.8,759.9 1123.1,761.8 1121.4,763.5 1119.7,765.1 1118.1,766.7 1116.5,768.2 1114.9,769.7 1113.3,771.2 1111.6,772.6 1109.9,774.1 1108.1,775.6 1106.2,777.2 1104.1,778.9 1102.0,780.6 1099.7,782.5 1097.4,784.4 1095.0,786.3 1092.5,788.3 1089.9,790.4 1087.3,792.4 1084.6,794.5 1081.9,796.6 1079.1,798.6 1076.2,800.7 1073.2,802.8 1070.2,804.8 1067.0,806.9 1063.7,809.1 1060.3,811.3 1056.8,813.6 1053.2,815.8 1049.5,818.0 1045.9,820.2 1042.2,822.4 1038.5,824.4 1034.9,826.4 1031.3,828.3 1027.8,830.1 1024.3,831.8 1020.9,833.4 1017.5,834.9 1014.1,836.4 1010.8,837.8 1007.4,839.1 1004.0,840.4 1000.5,841.7 997.0,842.9 993.4,844.0 989.6,845.1 985.8,846.2 981.7,847.3 977.6,848.4 973.4,849.4 969.0,850.3 964.6,851.3 960.1,852.1 955.6,853.0 951.1,853.8 946.5,854.5 942.0,855.2 937.5,855.8 933.0,856.3 928.5,856.8 924.1,857.2 919.7,857.7 915.3,858.0 910.9,858.3 906.5,858.6 902.1,858.8 897.6,858.9 893.1,858.9 888.4,858.8 883.7,858.7 878.9,858.4 874.0,858.0 869.0,857.5 863.8,856.9 858.6,856.3 853.2,855.5 847.9,854.6 842.5,853.7 837.0,852.7 831.6,851.7 826.1,850.7 820.7,849.6 815.4,848.5 810.1,847.3 804.8,846.2 799.6,845.1 794.4,844.0 789.3,842.8 784.1,841.5 778.9,840.2 773.6,838.8 768.3,837.3 762.9,835.6 757.4,833.9 751.8,831.9 745.9,829.8 739.7,827.4 733.2,824.8 726.6,822.1 719.8,819.2 713.1,816.3 706.5,813.4 700.0,810.5 693.7,807.6 687.7,804.9 682.1,802.3 677.0,800.0 672.4,797.8 668.2,795.8 664.3,793.9 660.7,792.1 657.4,790.4 654.2,788.7 651.1,787.1 648.2,785.5 645.2,783.9 642.2,782.2 639.1,780.5 635.8,778.7 632.5,776.8 629.3,775.0 626.2,773.2 623.1,771.4 620.0,769.6 616.9,767.8 613.7,765.9 610.6,764.0 607.4,762.1 604.1,760.1 600.7,758.1 597.2,756.0 593.6,753.9 589.9,751.7 586.1,749.4 582.3,747.2 578.4,744.9 574.4,742.5 570.5,740.2 566.5,737.8 562.6,735.4 558.6,733.0 554.7,730.6 550.8,728.2 546.9,725.7 543.0,723.3 539.0,720.8 535.1,718.2 531.1,715.7 527.1,713.1 523.2,710.6 519.3,708.0 515.5,705.5 511.7,703.0 508.0,700.5 504.3,698.1 500.7,695.7 496.9,693.2 493.1,690.6 489.2,687.9 485.4,685.3 481.7,682.8 478.2,680.3 474.9,678.0 471.8,675.9 469.1,674.0 466.8,672.4 464.9,671.1"/><polygon points="1173.8,706.4 1129.5,727.0 1164.1,753.7"/></g><g fill="#e22400"><polygon points="542.4,454.4 541.0,454.5 539.2,454.8 537.1,455.0 534.8,455.3 532.2,455.6 529.5,455.9 526.7,456.2 524.0,456.6 521.2,456.9 518.6,457.2 516.1,457.5 513.8,457.8 511.7,458.0 509.6,458.2 507.7,458.5 505.7,458.7 503.8,458.9 502.0,459.1 500.2,459.3 498.3,459.5 496.5,459.7 494.7,459.9 492.9,460.0 491.0,460.2 489.1,460.4 487.2,460.5 485.4,460.7 483.5,460.8 481.6,460.9 479.7,461.0 477.8,461.1 476.0,461.2 474.1,461.3 472.2,461.4 470.3,461.5 468.5,461.5 466.6,461.6 464.7,461.6 462.8,461.7 460.9,461.7 459.0,461.7 457.2,461.7 455.3,461.7 453.4,461.6 451.5,461.6 449.6,461.6 447.7,461.5 445.8,461.5 443.9,461.4 442.0,461.4 440.2,461.3 438.3,461.2 436.4,461.2 434.5,461.1 432.6,461.0 430.8,460.9 428.9,460.8 427.0,460.6 425.1,460.5 423.2,460.4 421.4,460.2 419.5,460.1 417.6,459.9 415.7,459.7 413.8,459.6 411.9,459.4 410.0,459.2 408.1,459.0 406.2,458.8 404.4,458.5 402.5,458.3 400.6,458.1 398.7,457.8 396.8,457.6 394.9,457.3 393.0,457.1 391.1,456.8 389.2,456.5 387.3,456.2 385.5,455.9 383.6,455.6 381.7,455.3 379.8,455.0 377.9,454.6 376.0,454.3 374.2,453.9 372.3,453.5 370.4,453.2 368.5,452.8 366.7,452.4 364.8,452.0 362.9,451.5 361.1,451.1 359.2,450.7 357.4,450.2 355.5,449.7 353.6,449.2 351.8,448.6 349.9,448.1 348.0,447.5 346.1,446.9 344.3,446.3 342.4,445.7 340.5,445.0 338.7,444.4 336.8,443.7 334.9,443.0 333.1,442.3 331.2,441.6 329.3,440.8 327.5,440.0 325.6,439.2 323.8,438.4 321.9,437.6 320.0,436.7 318.2,435.9 316.3,435.0 314.5,434.1 312.6,433.1 310.7,432.2 308.9,431.2 307.0,430.2 305.1,429.2 303.3,428.1 301.4,427.0 299.5,425.9 297.6,424.8 295.7,423.7 293.9,422.5 292.0,421.4 290.1,420.2 288.2,419.0 286.3,417.8 284.4,416.6 282.4,415.4 280.5,414.2 278.6,412.9 276.7,411.7 274.8,410.4 272.9,409.1 271.1,407.9 269.3,406.6 267.5,405.3 265.8,404.0 264.0,402.6 262.3,401.3 260.7,399.9 259.0,398.5 257.3,397.1 255.7,395.7 254.1,394.2 252.5,392.8 250.9,391.3 249.3,389.9 247.8,388.4 246.3,387.0 244.8,385.5 243.3,384.1 241.9,382.7 240.5,381.2 239.1,379.8 237.7,378.3 236.3,376.9 234.9,375.4 233.6,373.9 232.2,372.5 230.9,371.0 229.5,369.5 228.2,368.1 226.9,366.6 225.6,365.2 224.3,363.8 223.0,362.3 221.7,360.9 220.4,359.4 219.2,358.0 217.9,356.5 216.7,355.1 215.4,353.6 214.2,352.2 213.0,350.7 211.7,349.2 210.5,347.8 209.3,346.3 208.1,344.9 206.9,343.4 205.7,342.0 204.5,340.5 203.4,339.0 202.2,337.6 201.1,336.2 200.0,334.7 198.8,333.3 197.7,331.8 196.6,330.4 195.6,328.9 194.5,327.5 193.4,326.0 192.4,324.6 191.3,323.2 190.3,321.8 189.3,320.3 188.3,318.9 187.4,317.5 186.4,316.0 185.5,314.6 184.5,313.2 183.6,311.7 182.7,310.3 181.8,308.9 181.0,307.4 180.1,306.0 179.2,304.5 178.4,303.1 177.5,301.6 176.7,300.2 175.9,298.8 175.1,297.3 174.3,295.9 173.5,294.5 172.7,293.0 171.9,291.6 171.2,290.2 170.4,288.7 169.7,287.3 168.9,285.9 168.2,284.4 167.5,283.0 166.7,281.5 166.0,280.0 165.2,278.4 164.5,276.8 163.7,275.3 163.0,273.7 162.3,272.1 161.6,270.6 160.9,269.2 160.3,267.9 159.7,266.6 159.1,265.5 158.7,264.5 158.2,263.5 157.8,262.7 157.4,261.9 157.1,261.2 156.7,260.5 156.4,260.0 156.2,259.5 156.0,259.0 155.7,258.6 155.6,258.2 155.4,257.9 147.0,262.1 147.2,262.4 147.4,262.8 147.6,263.2 147.8,263.7 148.0,264.2 148.3,264.8 148.6,265.4 149.0,266.1 149.3,266.8 149.7,267.6 150.2,268.5 150.7,269.5 151.2,270.6 151.7,271.8 152.3,273.2 153.0,274.6 153.7,276.1 154.4,277.7 155.1,279.3 155.9,280.9 156.7,282.5 157.4,284.1 158.2,285.7 158.9,287.2 159.7,288.7 160.4,290.2 161.2,291.7 161.9,293.1 162.7,294.6 163.4,296.1 164.2,297.6 165.0,299.1 165.8,300.5 166.6,302.0 167.5,303.5 168.3,305.0 169.1,306.5 170.0,308.0 170.9,309.5 171.7,311.0 172.6,312.4 173.5,313.9 174.4,315.4 175.4,316.9 176.3,318.4 177.3,319.9 178.2,321.4 179.2,322.9 180.2,324.4 181.3,325.9 182.3,327.4 183.4,328.9 184.4,330.4 185.5,331.9 186.6,333.3 187.7,334.8 188.8,336.3 190.0,337.7 191.1,339.2 192.2,340.7 193.4,342.2 194.6,343.7 195.8,345.1 196.9,346.6 198.2,348.1 199.4,349.6 200.6,351.1 201.8,352.5 203.1,354.0 204.3,355.5 205.6,357.0 206.8,358.4 208.1,359.9 209.3,361.4 210.6,362.8 211.9,364.3 213.2,365.8 214.5,367.2 215.8,368.7 217.1,370.2 218.4,371.6 219.8,373.1 221.1,374.6 222.5,376.1 223.8,377.5 225.2,379.0 226.6,380.5 228.0,381.9 229.4,383.4 230.8,384.9 232.2,386.4 233.7,387.9 235.1,389.4 236.7,390.9 238.2,392.4 239.7,393.8 241.3,395.3 242.9,396.8 244.5,398.3 246.1,399.8 247.8,401.2 249.5,402.7 251.2,404.2 252.9,405.7 254.7,407.1 256.4,408.6 258.2,410.0 260.0,411.4 261.9,412.8 263.8,414.2 265.7,415.6 267.6,416.9 269.6,418.2 271.5,419.5 273.5,420.8 275.4,422.1 277.4,423.3 279.4,424.6 281.3,425.8 283.2,427.0 285.1,428.2 287.1,429.4 289.0,430.5 290.9,431.7 292.8,432.9 294.8,434.0 296.7,435.1 298.7,436.2 300.6,437.3 302.6,438.4 304.5,439.4 306.5,440.4 308.4,441.4 310.3,442.4 312.3,443.3 314.2,444.3 316.2,445.2 318.1,446.0 320.0,446.9 322.0,447.7 323.9,448.6 325.8,449.4 327.8,450.1 329.7,450.9 331.7,451.7 333.6,452.4 335.6,453.1 337.5,453.8 339.5,454.4 341.4,455.1 343.4,455.7 345.3,456.3 347.3,456.9 349.2,457.4 351.2,458.0 353.1,458.5 355.0,459.0 357.0,459.5 358.9,460.0 360.9,460.5 362.8,460.9 364.7,461.3 366.7,461.7 368.6,462.1 370.5,462.5 372.4,462.9 374.4,463.2 376.3,463.6 378.2,463.9 380.1,464.3 382.1,464.6 384.0,464.9 385.9,465.2 387.9,465.5 389.8,465.8 391.7,466.1 393.7,466.4 395.6,466.6 397.5,466.9 399.4,467.1 401.4,467.4 403.3,467.6 405.2,467.8 407.1,468.0 409.1,468.2 411.0,468.4 412.9,468.6 414.9,468.8 416.8,469.0 418.7,469.1 420.6,469.3 422.6,469.4 424.5,469.6 426.4,469.7 428.3,469.8 430.2,469.9 432.2,470.0 434.1,470.1 436.0,470.2 437.9,470.3 439.8,470.3 441.8,470.4 443.7,470.5 445.6,470.5 447.5,470.5 449.4,470.6 451.4,470.6 453.3,470.6 455.2,470.6 457.1,470.6 459.1,470.6 461.0,470.6 462.9,470.6 464.9,470.6 466.8,470.5 468.7,470.5 470.7,470.4 472.6,470.3 474.5,470.2 476.4,470.1 478.4,470.0 480.3,469.9 482.2,469.8 484.1,469.6 486.0,469.5 487.9,469.3 489.9,469.2 491.8,469.0 493.7,468.8 495.6,468.6 497.4,468.4 499.3,468.3 501.1,468.0 503.0,467.8 504.9,467.6 506.7,467.4 508.7,467.2 510.7,466.9 512.7,466.7 514.8,466.4 517.1,466.2 519.6,465.9 522.2,465.6 525.0,465.2 527.8,464.9 530.5,464.6 533.2,464.2 535.8,463.9 538.1,463.7 540.2,463.4 542.0,463.2 543.4,463.0"/><polygon points="135.2,221.7 130.3,270.2 171.6,253.4"/><polygon points="1070.2,380.2 1071.4,380.5 1073.1,380.8 1074.9,381.3 1077.0,381.7 1079.2,382.2 1081.6,382.8 1084.1,383.4 1086.5,384.0 1089.0,384.6 1091.4,385.3 1093.6,386.0 1095.7,386.7 1097.8,387.4 1099.8,388.2 1101.8,388.9 1103.8,389.7 1105.8,390.5 1107.7,391.3 1109.7,392.2 1111.7,393.1 1113.6,394.0 1115.6,394.9 1117.6,395.9 1119.5,396.9 1121.6,398.0 1123.6,399.1 1125.7,400.2 1127.8,401.4 1129.8,402.6 1131.9,403.8 1133.9,405.0 1135.9,406.3 1137.9,407.5 1139.8,408.8 1141.6,410.1 1143.3,411.4 1145.0,412.8 1146.6,414.1 1148.2,415.5 1149.7,416.9 1151.2,418.4 1152.6,419.8 1154.0,421.3 1155.4,422.9 1156.8,424.4 1158.1,426.1 1159.5,427.7 1160.8,429.4 1162.1,431.1 1163.4,432.9 1164.7,434.7 1166.0,436.6 1167.3,438.5 1168.5,440.5 1169.8,442.5 1171.0,444.4 1172.2,446.4 1173.3,448.4 1174.5,450.3 1175.6,452.2 1176.6,454.1 1177.6,455.9 1178.6,457.7 1179.5,459.5 1180.4,461.2 1181.3,463.0 1182.1,464.8 1182.9,466.5 1183.7,468.3 1184.5,470.1 1185.2,471.9 1186.0,473.8 1186.7,475.7 1187.4,477.6 1188.1,479.6 1188.7,481.6 1189.4,483.6 1190.0,485.6 1190.6,487.6 1191.2,489.6 1191.8,491.7 1192.4,493.7 1192.9,495.6 1193.5,497.6 1194.0,499.5 1194.4,501.5 1194.9,503.4 1195.3,505.4 1195.7,507.3 1196.1,509.3 1196.4,511.2 1196.7,513.2 1197.0,515.2 1197.2,517.2 1197.4,519.2 1197.6,521.2 1197.7,523.3 1197.8,525.4 1197.8,527.8 1197.9,530.1 1197.9,532.5 1197.9,534.9 1197.9,537.2 1197.9,539.3 1197.9,541.3 1197.8,543.1 1197.8,544.7 1197.8,545.9 1207.8,546.1 1207.8,544.9 1207.9,543.4 1208.0,541.6 1208.1,539.6 1208.2,537.4 1208.3,535.1 1208.4,532.7 1208.5,530.2 1208.5,527.7 1208.5,525.3 1208.5,522.9 1208.4,520.6 1208.3,518.4 1208.2,516.3 1208.0,514.2 1207.9,512.1 1207.8,509.9 1207.6,507.8 1207.4,505.6 1207.2,503.5 1206.9,501.3 1206.6,499.2 1206.3,497.0 1205.9,494.8 1205.5,492.6 1205.0,490.4 1204.5,488.2 1203.9,486.0 1203.3,483.9 1202.6,481.7 1201.9,479.5 1201.2,477.4 1200.4,475.2 1199.7,473.1 1198.9,471.1 1198.0,469.0 1197.2,467.0 1196.3,465.0 1195.5,463.1 1194.6,461.1 1193.6,459.2 1192.7,457.3 1191.7,455.5 1190.7,453.6 1189.7,451.7 1188.6,449.8 1187.5,447.9 1186.4,446.0 1185.3,444.0 1184.1,442.0 1182.9,440.0 1181.6,437.9 1180.3,435.8 1179.0,433.7 1177.6,431.7 1176.2,429.6 1174.7,427.6 1173.2,425.6 1171.7,423.7 1170.2,421.8 1168.6,420.0 1167.1,418.3 1165.6,416.6 1164.0,414.9 1162.4,413.3 1160.8,411.7 1159.1,410.1 1157.4,408.5 1155.6,407.0 1153.8,405.5 1152.0,404.0 1150.1,402.6 1148.1,401.1 1146.0,399.7 1143.9,398.3 1141.8,396.9 1139.6,395.6 1137.4,394.3 1135.2,393.1 1133.0,391.9 1130.8,390.7 1128.6,389.6 1126.4,388.5 1124.3,387.5 1122.1,386.5 1120.0,385.5 1117.8,384.6 1115.7,383.7 1113.5,382.9 1111.4,382.1 1109.3,381.3 1107.1,380.6 1105.0,379.9 1102.8,379.2 1100.7,378.5 1098.5,377.9 1096.2,377.3 1093.7,376.6 1091.2,376.0 1088.6,375.5 1086.0,374.9 1083.5,374.4 1081.1,373.9 1078.8,373.4 1076.7,373.0 1074.8,372.6 1073.3,372.3 1072.0,372.0"/><polygon points="1195.7,586.5 1180.8,542.0 1224.6,548.2"/><polygon points="459.9,678.3 461.8,679.6 464.1,681.2 466.9,683.1 469.9,685.2 473.2,687.5 476.8,689.9 480.5,692.5 484.3,695.1 488.1,697.8 492.0,700.4 495.8,703.0 499.5,705.5 503.1,707.9 506.8,710.4 510.6,712.9 514.5,715.4 518.4,718.0 522.3,720.6 526.3,723.2 530.2,725.7 534.2,728.3 538.2,730.9 542.1,733.4 546.0,735.8 549.9,738.3 553.9,740.7 557.8,743.2 561.8,745.6 565.8,748.0 569.7,750.4 573.7,752.8 577.5,755.1 581.4,757.4 585.1,759.6 588.8,761.8 592.4,764.0 595.9,766.1 599.3,768.1 602.5,770.1 605.7,772.0 608.9,774.0 612.0,775.8 615.2,777.7 618.3,779.6 621.4,781.4 624.6,783.2 627.9,785.1 631.2,786.9 634.5,788.7 637.6,790.5 640.6,792.2 643.6,793.8 646.6,795.5 649.8,797.1 653.0,798.8 656.4,800.6 660.1,802.4 664.0,804.4 668.3,806.4 673.0,808.6 678.1,811.0 683.6,813.7 689.6,816.5 695.9,819.4 702.4,822.4 709.0,825.5 715.8,828.5 722.5,831.5 729.2,834.4 735.8,837.1 742.2,839.6 748.2,841.9 754.1,843.9 759.7,845.7 765.3,847.4 770.8,849.0 776.2,850.4 781.5,851.8 786.8,853.1 792.1,854.3 797.4,855.4 802.6,856.5 807.9,857.6 813.2,858.7 818.6,859.9 824.1,860.9 829.6,862.0 835.1,863.0 840.7,864.0 846.2,864.9 851.7,865.8 857.1,866.6 862.5,867.3 867.9,867.9 873.1,868.4 878.3,868.8 883.3,869.1 888.2,869.2 893.0,869.3 897.8,869.3 902.4,869.1 907.0,868.9 911.6,868.7 916.1,868.3 920.6,867.9 925.1,867.5 929.7,867.0 934.2,866.5 938.8,865.9 943.4,865.3 948.1,864.6 952.8,863.8 957.4,863.0 962.1,862.1 966.7,861.2 971.2,860.2 975.7,859.2 980.0,858.2 984.3,857.1 988.4,856.0 992.5,854.8 996.4,853.6 1000.1,852.4 1003.8,851.1 1007.5,849.8 1011.0,848.5 1014.5,847.1 1018.1,845.6 1021.6,844.1 1025.1,842.5 1028.6,840.8 1032.2,839.1 1035.9,837.2 1039.6,835.2 1043.4,833.1 1047.2,831.0 1051.0,828.8 1054.7,826.5 1058.4,824.2 1062.0,821.9 1065.6,819.6 1069.1,817.3 1072.4,815.1 1075.6,813.0 1078.8,810.8 1081.8,808.6 1084.8,806.5 1087.7,804.3 1090.5,802.1 1093.3,800.0 1095.9,797.9 1098.5,795.8 1101.0,793.8 1103.4,791.8 1105.7,789.8 1108.0,788.0 1110.2,786.2 1112.2,784.5 1114.2,782.8 1116.0,781.2 1117.8,779.7 1119.5,778.1 1121.2,776.6 1122.9,775.0 1124.6,773.4 1126.2,771.8 1128.0,770.0 1129.7,768.2 1131.6,766.2 1133.6,764.0 1135.7,761.7 1137.7,759.3 1139.8,756.9 1141.8,754.5 1143.8,752.2 1145.6,750.0 1147.3,748.0 1148.7,746.2 1150.0,744.7 1151.0,743.5 1144.0,737.5 1143.0,738.7 1141.7,740.3 1140.2,742.1 1138.5,744.1 1136.7,746.3 1134.8,748.6 1132.8,750.9 1130.7,753.3 1128.7,755.6 1126.7,757.8 1124.8,759.9 1123.1,761.8 1121.4,763.5 1119.7,765.1 1118.1,766.7 1116.5,768.2 1114.9,769.7 1113.3,771.2 1111.6,772.6 1109.9,774.1 1108.1,775.6 1106.2,777.2 1104.1,778.9 1102.0,780.6 1099.7,782.5 1097.4,784.4 1095.0,786.3 1092.5,788.3 1089.9,790.4 1087.3,792.4 1084.6,794.5 1081.9,796.6 1079.1,798.6 1076.2,800.7 1073.2,802.8 1070.2,804.8 1067.0,806.9 1063.7,809.1 1060.3,811.3 1056.8,813.6 1053.2,815.8 1049.5,818.0 1045.9,820.2 1042.2,822.4 1038.5,824.4 1034.9,826.4 1031.3,828.3 1027.8,830.1 1024.3,831.8 1020.9,833.4 1017.5,834.9 1014.1,836.4 1010.8,837.8 1007.4,839.1 1004.0,840.4 1000.5,841.7 997.0,842.9 993.4,844.0 989.6,845.1 985.8,846.2 981.7,847.3 977.6,848.4 973.4,849.4 969.0,850.3 964.6,851.3 960.1,852.1 955.6,853.0 951.1,853.8 946.5,854.5 942.0,855.2 937.5,855.8 933.0,856.3 928.5,856.8 924.1,857.2 919.7,857.7 915.3,858.0 910.9,858.3 906.5,858.6 902.1,858.8 897.6,858.9 893.1,858.9 888.4,858.8 883.7,858.7 878.9,858.4 874.0,858.0 869.0,857.5 863.8,856.9 858.6,856.3 853.2,855.5 847.9,854.6 842.5,853.7 837.0,852.7 831.6,851.7 826.1,850.7 820.7,849.6 815.4,848.5 810.1,847.3 804.8,846.2 799.6,845.1 794.4,844.0 789.3,842.8 784.1,841.5 778.9,840.2 773.6,838.8 768.3,837.3 762.9,835.6 757.4,833.9 751.8,831.9 745.9,829.8 739.7,827.4 733.2,824.8 726.6,822.1 719.8,819.2 713.1,816.3 706.5,813.4 700.0,810.5 693.7,807.6 687.7,804.9 682.1,802.3 677.0,800.0 672.4,797.8 668.2,795.8 664.3,793.9 660.7,792.1 657.4,790.4 654.2,788.7 651.1,787.1 648.2,785.5 645.2,783.9 642.2,782.2 639.1,780.5 635.8,778.7 632.5,776.8 629.3,775.0 626.2,773.2 623.1,771.4 620.0,769.6 616.9,767.8 613.7,765.9 610.6,764.0 607.4,762.1 604.1,760.1 600.7,758.1 597.2,756.0 593.6,753.9 589.9,751.7 586.1,749.4 582.3,747.2 578.4,744.9 574.4,742.5 570.5,740.2 566.5,737.8 562.6,735.4 558.6,733.0 554.7,730.6 550.8,728.2 546.9,725.7 543.0,723.3 539.0,720.8 535.1,718.2 531.1,715.7 527.1,713.1 523.2,710.6 519.3,708.0 515.5,705.5 511.7,703.0 508.0,700.5 504.3,698.1 500.7,695.7 496.9,693.2 493.1,690.6 489.2,687.9 485.4,685.3 481.7,682.8 478.2,680.3 474.9,678.0 471.8,675.9 469.1,674.0 466.8,672.4 464.9,671.1"/><polygon points="1173.8,706.4 1129.5,727.0 1164.1,753.7"/></g></svg>
</div></div>
</body></html>
